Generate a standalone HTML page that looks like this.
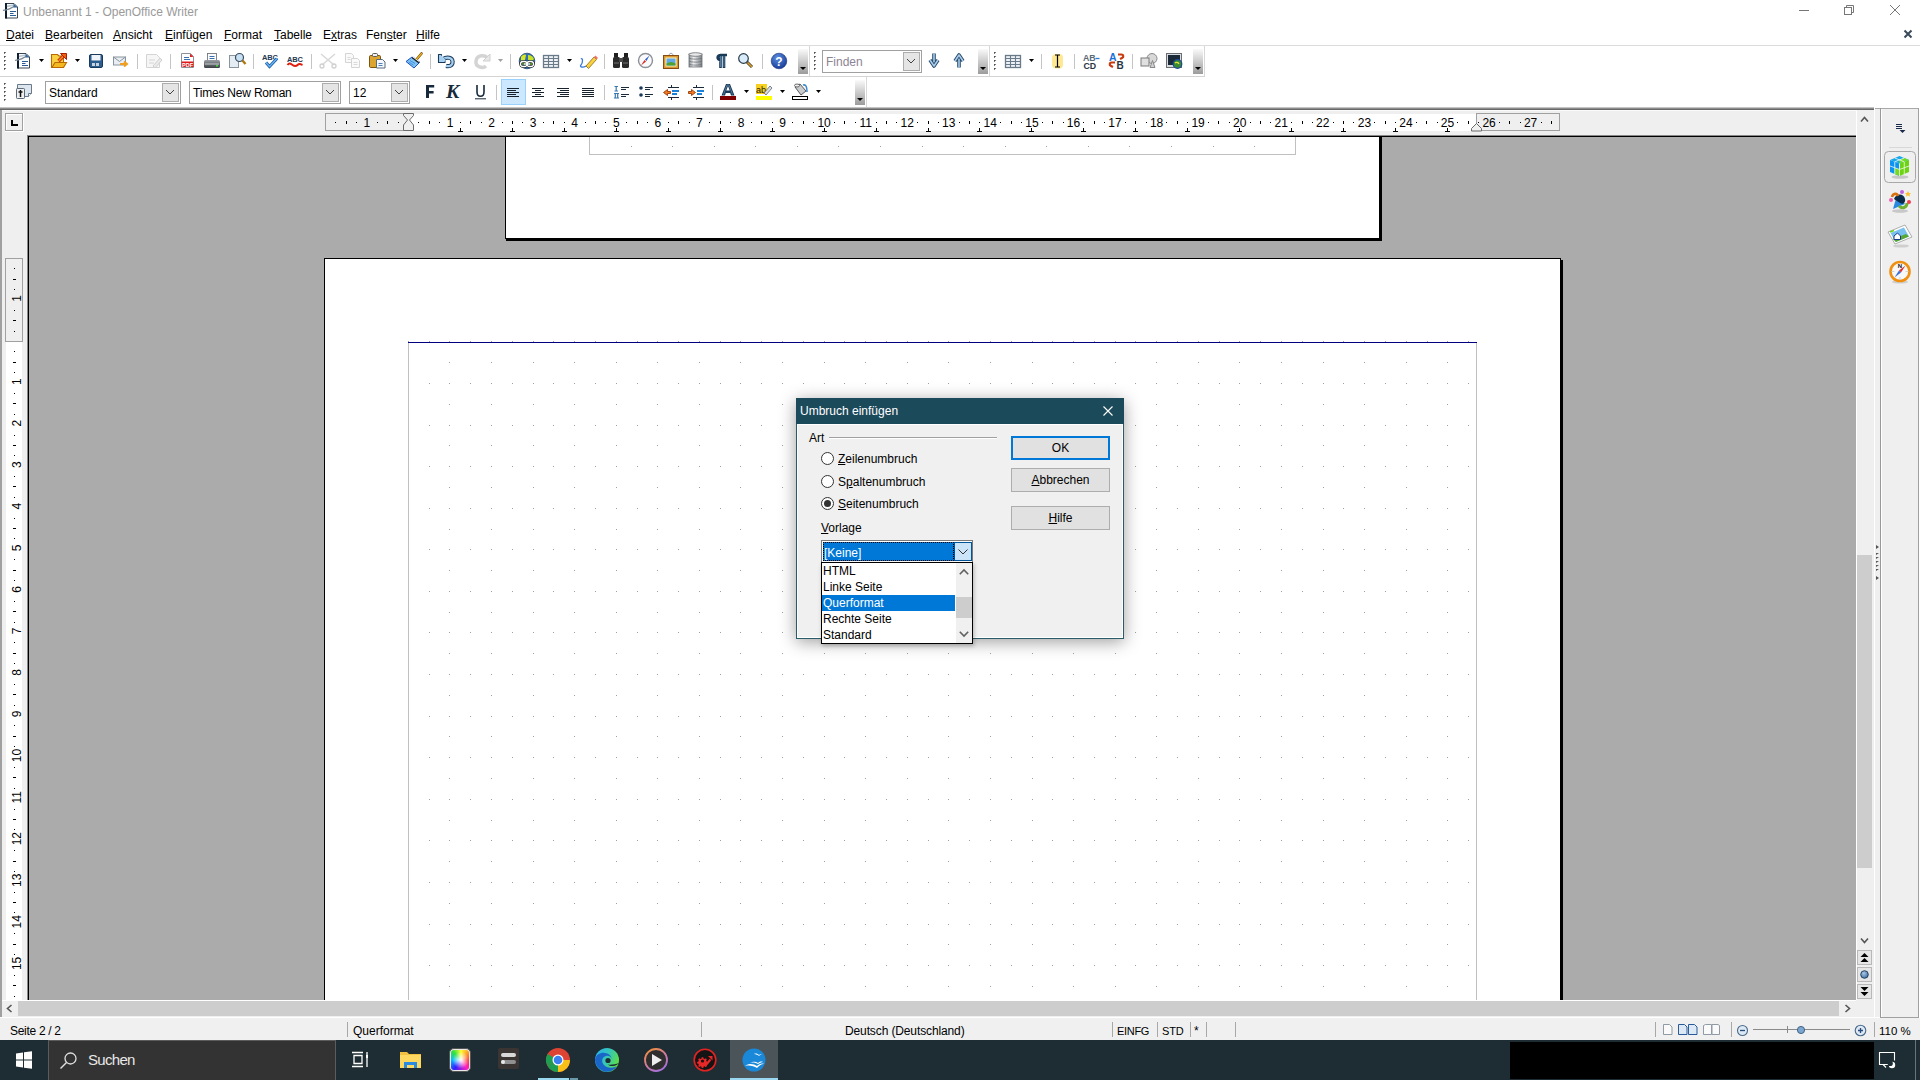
<!DOCTYPE html>
<html><head><meta charset="utf-8">
<style>
*{box-sizing:border-box}
html,body{margin:0;padding:0;width:1920px;height:1080px;overflow:hidden;background:#fff;font-family:"Liberation Sans",sans-serif;font-size:12px;color:#000}
.a{position:absolute}
.t{position:absolute;white-space:pre;font-size:12px;line-height:14px}
.u{text-decoration:underline;text-underline-offset:1px}
.sep{position:absolute;width:1px;background:#c8c8c8}
svg{position:absolute;overflow:visible}
</style></head><body>

<!-- ========== TITLE BAR ========== -->
<div class="a" style="left:0;top:0;width:1920px;height:45px;background:#fff"></div>
<div class="t" style="left:23px;top:5px;color:#9a9a9a">Unbenannt 1 - OpenOffice Writer</div>

<svg width="1920" height="46" viewBox="0 0 1920 46" style="left:0;top:0">
<!-- writer icon -->
<path d="M5.5 3.5h8.5l3.5 3.5v11h-12z" fill="#fcfdfe" stroke="#3a4650" stroke-width="1"/>
<rect x="5" y="3" width="2" height="15.5" fill="#0e1e30"/>
<path d="M10 11.5h6M10 13.5h3.5M10 15.5h6" stroke="#2c5c90" stroke-width="1.1"/>
<path d="M3 10.5c3-1 6-0.5 9-3c1.5-1 3-1.5 5-1" stroke="#7a8894" stroke-width="1.3" fill="none"/>
<path d="M7 6.5c2-1 5-1 7-1.5" stroke="#b8c4ce" stroke-width="1.5" fill="none"/>
<path d="M13.5 3.5l4 4h-4z" fill="#3a6a9a"/>
<!-- window controls -->
<rect x="1799" y="10" width="10" height="1" fill="#777"/>
<rect x="1844.5" y="7.5" width="7" height="7" fill="none" stroke="#777"/>
<path d="M1846.5 7.5v-2h7v7h-2" fill="none" stroke="#777"/>
<path d="M1890 5l10 10M1900 5l-10 10" stroke="#777" stroke-width="1"/>
<path d="M1904.5 30.5l7 7M1911.5 30.5l-7 7" stroke="#3a4a5a" stroke-width="2"/>
</svg>

<!-- ========== MENU BAR ========== -->
<div class="t" style="left:6px;top:28px"><span class="u">D</span>atei</div>
<div class="t" style="left:45px;top:28px"><span class="u">B</span>earbeiten</div>
<div class="t" style="left:113px;top:28px"><span class="u">A</span>nsicht</div>
<div class="t" style="left:165px;top:28px"><span class="u">E</span>infügen</div>
<div class="t" style="left:224px;top:28px"><span class="u">F</span>ormat</div>
<div class="t" style="left:274px;top:28px"><span class="u">T</span>abelle</div>
<div class="t" style="left:323px;top:28px">E<span class="u">x</span>tras</div>
<div class="t" style="left:366px;top:28px">Fen<span class="u">s</span>ter</div>
<div class="t" style="left:416px;top:28px"><span class="u">H</span>ilfe</div>
<div class="a" style="left:0;top:45px;width:1920px;height:1px;background:#dcdcdc"></div>

<!-- ========== TOOLBARS ========== -->
<div id="tb1" class="a" style="left:0;top:46px;width:1920px;height:30px;background:#fff"></div>
<div class="a" style="left:0;top:76px;width:1205px;height:1px;background:#d4d4d4"></div>
<div id="tb2" class="a" style="left:0;top:77px;width:1920px;height:31px;background:#fff"></div>

<!-- TOOLBAR 1 ICONS -->
<svg width="1920" height="62" viewBox="0 46 1920 62" style="left:0;top:46px">
<defs>
<linearGradient id="hdl" x1="0" y1="0" x2="0" y2="1"><stop offset="0" stop-color="#fafafa"/><stop offset="1" stop-color="#9c9c9c"/></linearGradient>
<linearGradient id="prt" x1="0" y1="0" x2="0" y2="1"><stop offset="0" stop-color="#9aa0a4"/><stop offset="1" stop-color="#3a3f44"/></linearGradient>
<radialGradient id="hlp" cx="0.4" cy="0.3" r="0.7"><stop offset="0" stop-color="#5a8ee0"/><stop offset="1" stop-color="#1a3f9a"/></radialGradient>
<radialGradient id="glb" cx="0.4" cy="0.35" r="0.7"><stop offset="0" stop-color="#b8d840"/><stop offset="0.6" stop-color="#4a8a60"/><stop offset="1" stop-color="#1d5a9a"/></radialGradient>
<linearGradient id="arw" x1="0" y1="0" x2="1" y2="0"><stop offset="0" stop-color="#e0eefa"/><stop offset="1" stop-color="#7fb0dc"/></linearGradient>
<linearGradient id="db" x1="0" y1="0" x2="1" y2="0"><stop offset="0" stop-color="#8a8f94"/><stop offset="0.35" stop-color="#f2f2f2"/><stop offset="1" stop-color="#7a7f84"/></linearGradient>
</defs>
<g id="grips" fill="#4a4a4a">
<path d="M4 52h2.2l-2.2 2.2zM4 56h2.2l-2.2 2.2zM4 60h2.2l-2.2 2.2zM4 64h2.2l-2.2 2.2zM4 68h2.2l-2.2 2.2z"/>
<path d="M4 83h2.2l-2.2 2.2zM4 87h2.2l-2.2 2.2zM4 91h2.2l-2.2 2.2zM4 95h2.2l-2.2 2.2zM4 99h2.2l-2.2 2.2z"/>
<path d="M814 52h2.2l-2.2 2.2zM814 56h2.2l-2.2 2.2zM814 60h2.2l-2.2 2.2zM814 64h2.2l-2.2 2.2zM814 68h2.2l-2.2 2.2z"/>
<path d="M994 52h2.2l-2.2 2.2zM994 56h2.2l-2.2 2.2zM994 60h2.2l-2.2 2.2zM994 64h2.2l-2.2 2.2zM994 68h2.2l-2.2 2.2z"/>
</g>
<!-- separators -->
<g fill="#c4c4c4">
<rect x="137" y="54" width="1" height="15"/><rect x="170" y="54" width="1" height="15"/>
<rect x="253" y="54" width="1" height="15"/><rect x="311" y="54" width="1" height="15"/>
<rect x="430" y="54" width="1" height="15"/><rect x="510" y="54" width="1" height="15"/>
<rect x="604" y="54" width="1" height="15"/><rect x="762" y="54" width="1" height="15"/>
<rect x="1041" y="54" width="1" height="15"/><rect x="1074" y="54" width="1" height="15"/>
<rect x="1132" y="54" width="1" height="15"/>
</g>
<!-- toolbar borders -->
<g fill="#d8d8d8"><rect x="809" y="46" width="1" height="30"/><rect x="989" y="46" width="1" height="30"/><rect x="1204" y="46" width="1" height="30"/><rect x="866" y="77" width="1" height="30"/></g>
<!-- handles -->
<rect x="798" y="49" width="10" height="25" fill="url(#hdl)"/><path d="M800 67h6l-3 3z"/>
<rect x="978" y="49" width="10" height="25" fill="url(#hdl)"/><path d="M980 67h6l-3 3z"/>
<rect x="1193" y="49" width="10" height="25" fill="url(#hdl)"/><path d="M1195 67h6l-3 3z"/>
<rect x="855" y="80" width="10" height="25" fill="url(#hdl)"/><path d="M857 98h6l-3 3z"/>
<!-- dropdown arrows -->
<g fill="#000"><path d="M39 59h5l-2.5 3z"/><path d="M75 59h5l-2.5 3z"/><path d="M393 59h5l-2.5 3z"/><path d="M462 59h5l-2.5 3z"/><path d="M567 59h5l-2.5 3z"/><path d="M1029 59h5l-2.5 3z"/>
<path d="M744 90h5l-2.5 3z"/><path d="M780 90h5l-2.5 3z"/><path d="M816 90h5l-2.5 3z"/></g>
<path d="M498 59h5l-2.5 3z" fill="#a0a0a0"/>

<!-- 1 new doc -->
<path d="M17.5 53.5h8.5l3.5 3.5v11h-12z" fill="#fcfdfe" stroke="#3a4650" stroke-width="1"/>
<rect x="17" y="53" width="2" height="15.5" fill="#0e1e30"/>
<path d="M22 61.5h6M22 63.5h3.5M22 65.5h6" stroke="#2c5c90" stroke-width="1.1"/>
<path d="M15 60.5c3-1 6-0.5 9-3c1.5-1 3-1.5 5-1" stroke="#7a8894" stroke-width="1.3" fill="none"/>
<path d="M19 56.5c2-1 5-1 7-1.5" stroke="#b8c4ce" stroke-width="1.5" fill="none"/>
<path d="M25.5 53.5l4 4h-4z" fill="#3a6a9a"/>
<!-- 2 open folder -->
<path d="M51.5 54.5h6l1.5 1.5h4.5v11.5h-12z" fill="#f8d040" stroke="#b86a00" stroke-width="1.1"/>
<path d="M55 62.5h11.5l-3 5h-11.5z" fill="#f4b820" stroke="#b86a00" stroke-width="1.1"/>
<path d="M58.5 61l5.5-5.5" stroke="#a82000" stroke-width="3.4"/>
<path d="M58.5 61l5.5-5.5" stroke="#f87820" stroke-width="1.8"/>
<path d="M60.5 53.5h6v6z" fill="#f06010" stroke="#a82000" stroke-width="1"/>
<!-- 3 save -->
<rect x="89.5" y="54.5" width="13" height="13" rx="1.5" fill="#2c5d8f" stroke="#1a3a5c"/>
<rect x="91.5" y="55" width="9" height="5.5" fill="#f0f4f8"/>
<rect x="92" y="63" width="3" height="3" fill="#c8d4e0"/><rect x="96" y="63" width="3" height="3" fill="#c8d4e0"/>
<!-- 4 email -->
<rect x="113.5" y="57" width="12" height="8" fill="#e8eef4" stroke="#8a949e"/>
<path d="M113.5 57l6 4.5l6-4.5" stroke="#8a949e" fill="none"/>
<path d="M120 64h6M124 61.5l3 2.5l-3 2.5" stroke="#f0a020" stroke-width="2" fill="none"/>
<!-- 5 edit doc faded -->
<path d="M146.5 54.5h10l3 3v10h-13z" fill="#f6f6f6" stroke="#d4d4d4"/>
<path d="M149 60h6M149 63h5" stroke="#d4d4d4"/>
<path d="M153 66l7-8l2 2l-7 8z" fill="#eaeaea" stroke="#d0d0d0"/>
<!-- 6 pdf -->
<path d="M181.5 53.5h9l3 3v11h-12z" fill="#fff" stroke="#8c9298"/>
<path d="M190 53.5l3.5 3.5h-3.5z" fill="#e02020"/>
<path d="M184 57.5h5M184 59.5h6" stroke="#3a70b0" stroke-width="1"/>
<rect x="181.5" y="61.5" width="12" height="5.5" fill="#e01818"/>
<text x="187.5" y="66.5" font-size="5.5" font-weight="bold" fill="#fff" text-anchor="middle" font-family="Liberation Sans">PDF</text>
<!-- 7 print -->
<rect x="207.5" y="53.5" width="9" height="7.5" fill="#fbfbfb" stroke="#707880" stroke-width="0.9"/>
<path d="M209.5 56.5h5M209.5 58.5h5" stroke="#3a70b0" stroke-width="1"/>
<rect x="204" y="60" width="16" height="8" rx="1.5" fill="url(#prt)"/>
<rect x="205" y="63.5" width="14" height="1" fill="#c8ccd0"/>
<rect x="216" y="65" width="2" height="1.5" fill="#40e040"/>
<!-- 8 preview -->
<rect x="229.5" y="55.5" width="9" height="12" fill="#e4ecf4" stroke="#8a949e"/>
<circle cx="239.5" cy="57.5" r="4" fill="#c8e0f4" stroke="#3a4a5a" stroke-width="1.2"/>
<path d="M242.5 60.5l3 3.5" stroke="#b07810" stroke-width="2.4"/>
<!-- 9 ABC check -->
<text x="262" y="59.5" font-size="7.5" font-weight="bold" fill="#1e3a54" font-family="Liberation Sans" textLength="16">ABC</text>
<path d="M266 62.5l3.5 4l7.5-8" stroke="#1a5aa8" stroke-width="3" fill="none"/>
<path d="M266 62.5l3.5 4l7.5-8" stroke="#6ab4f0" stroke-width="1.4" fill="none"/>
<!-- 10 ABC wave -->
<text x="287" y="61.5" font-size="7.5" font-weight="bold" fill="#1e3a54" font-family="Liberation Sans" textLength="16">ABC</text>
<path d="M287.5 65c2-3 3.5-1 5 0s3 2 5 0s3-1 5 0" stroke="#e02010" stroke-width="2" fill="none"/>
<!-- 11 cut faded -->
<path d="M321 54l13 11M335 54l-13 11" stroke="#d8d8d8" stroke-width="1.5"/>
<circle cx="322" cy="66" r="2" fill="none" stroke="#d0d0d0" stroke-width="1.3"/><circle cx="334" cy="66" r="2" fill="none" stroke="#d0d0d0" stroke-width="1.3"/>
<!-- 12 copy faded -->
<path d="M345.5 53.5h6l2 2v7h-8z" fill="#fafafa" stroke="#d4d4d4"/>
<path d="M351.5 58.5h6l2 2v7h-8z" fill="#fafafa" stroke="#d4d4d4"/>
<path d="M347.5 57.5h3M347.5 59.5h3M353.5 62.5h4M353.5 64.5h4" stroke="#d0d0d0" stroke-width="0.8"/>
<!-- 13 paste -->
<rect x="369.5" y="55.5" width="11" height="12" rx="1.2" fill="#dca530" stroke="#7a5410"/>
<rect x="372.5" y="53.5" width="5" height="3" rx="1" fill="#f0f0f0" stroke="#5a5a5a"/>
<path d="M376.5 59.5h6l2.5 2.5v6h-8.5z" fill="#f4f8fc" stroke="#5a6a7a"/>
<path d="M378.5 63.5h4M378.5 65.5h4" stroke="#3a70b0" stroke-width="0.9"/>
<!-- 14 brush -->
<path d="M416.5 59.5l5-6" stroke="#6a4a08" stroke-width="2.6" stroke-linecap="round"/>
<path d="M416.5 59.5l5-6" stroke="#e8b020" stroke-width="1.4" stroke-linecap="round"/>
<path d="M406 61.5l6-4.5l7.5 5.5l-5.5 5.5z" fill="#7cc4f4" stroke="#1a50c0" stroke-width="1"/>
<path d="M408.5 62l5 3M410 60.5l5 3" stroke="#3a80d8" stroke-width="0.8"/>
<path d="M412.5 57.5l6.5 5" stroke="#222" stroke-width="2.2"/>
<path d="M413 57l6 4.5" stroke="#f0f4f8" stroke-width="1"/>
<!-- 15 undo -->
<path d="M443 59c4-2.5 9.5-1.5 9.5 2.5c0.5 3.8-3 5.2-6.5 4.5" stroke="#1a3a5a" stroke-width="4.2" fill="none"/>
<path d="M443 59c4-2.5 9.5-1.5 9.5 2.5c0.5 3.8-3 5.2-6.5 4.5" stroke="#a8d0f0" stroke-width="2.2" fill="none"/>
<path d="M438.5 54.5h3v4l3.5 0.5v3.5h-6.5z" fill="#a8d0f0" stroke="#1a3a5a" stroke-width="1.1" stroke-linejoin="round"/>
<path d="M440 56l5 5" stroke="#a8d0f0" stroke-width="2.5"/>
<!-- 16 redo faded -->
<path d="M488 58.5c-3-4-11-4-12 2.5c-1 6 7 8 10 5" stroke="#d4d4d4" stroke-width="3.5" fill="none"/>
<path d="M490 54v7h-7z" fill="#e8e8e8" stroke="#d0d0d0"/>
<!-- 17 globe -->
<circle cx="527" cy="61" r="7.8" fill="#2f6eb4" stroke="#1a3a60" stroke-width="0.7"/>
<path d="M521 57c1-2 4-3 5-2l-1 5l-4 1z" fill="#d8e820"/><path d="M528 55c3 0 5 2 6 4l-2 2l-4-1z" fill="#c8e020"/>
<path d="M522 63l3-1l1 3h-3zM530 62l3 0l0 3l-3 0z" fill="#5a8a20"/>
<rect x="520.5" y="61.5" width="6.5" height="5" rx="2.5" fill="none" stroke="#111" stroke-width="2.4"/>
<rect x="527" y="61.5" width="6.5" height="5" rx="2.5" fill="none" stroke="#111" stroke-width="2.4"/>
<rect x="520.5" y="61.5" width="6.5" height="5" rx="2.5" fill="none" stroke="#fff" stroke-width="1.3"/>
<rect x="527" y="61.5" width="6.5" height="5" rx="2.5" fill="none" stroke="#fff" stroke-width="1.3"/>
<path d="M524 64h6" stroke="#fff" stroke-width="1.3"/>
<!-- 18 table -->
<rect x="543.5" y="55.5" width="15" height="12" fill="#eef2f6" stroke="#6a7a88" stroke-width="1.3"/>
<path d="M543.5 58.5h15M543.5 61.5h15M543.5 64.5h15M548.5 55.5v12M553.5 55.5v12" stroke="#6a7a88" stroke-width="1.1"/>
<!-- 19 draw pencil -->
<path d="M581 59c2-2 2 4 0 6s2 3 5 1" stroke="#3a7ad8" stroke-width="1.3" fill="none"/>
<path d="M586 66l8-9l2.5 2.5l-8 9z" fill="#f8d040" stroke="#8a6a10" stroke-width="0.8"/>
<path d="M594 57l1.5-1.5l2.5 2.5l-1.5 1.5z" fill="#f07070"/>
<!-- 20 binoculars -->
<rect x="614" y="53" width="4" height="4" fill="#202020"/><rect x="624" y="53" width="4" height="4" fill="#202020"/>
<rect x="613" y="57" width="7" height="11" rx="1.5" fill="#2a2a2a"/><rect x="622" y="57" width="7" height="11" rx="1.5" fill="#2a2a2a"/>
<rect x="619" y="58" width="4" height="4" fill="#4a4a4a"/>
<path d="M614 63h5M623 63h5" stroke="#888" stroke-width="0.8"/>
<!-- 21 compass -->
<circle cx="645.5" cy="60.5" r="7" fill="#fafafa" stroke="#8a9098" stroke-width="1.4"/>
<path d="M649.5 55.5l-3 5.5l-1.5-1.5z" fill="#2a5ad0"/><path d="M641 65.5l3.5-5.5l1.5 1.5z" fill="#e02020"/>
<!-- 22 gallery -->
<path d="M668.5 55l2.5-2l2.5 2" stroke="#888" fill="none" stroke-width="0.8"/>
<rect x="663.5" y="55.5" width="15" height="13" fill="#d89a30" stroke="#8a4a10"/>
<rect x="665.5" y="57.5" width="11" height="9" fill="#fff4c0"/>
<rect x="666.5" y="58.5" width="9" height="7" fill="#60a8e8"/>
<path d="M666.5 63.5c3-2 6-2 9 0v2h-9z" fill="#50a030"/>
<!-- 23 db -->
<rect x="689" y="54" width="13" height="13" fill="url(#db)" stroke="#6a6f74" stroke-width="0.8"/>
<ellipse cx="695.5" cy="54.5" rx="6.5" ry="1.8" fill="#e8e8e8" stroke="#6a6f74" stroke-width="0.8"/>
<path d="M689 58c2 1.5 11 1.5 13 0M689 61c2 1.5 11 1.5 13 0M689 64c2 1.5 11 1.5 13 0" stroke="#6a6f74" stroke-width="0.8" fill="none"/>
<!-- 24 pilcrow -->
<path d="M720 55h7M721 55c-4 0-5 5 0 5M720.5 55v13M724 55v13" stroke="#1a3a5a" stroke-width="2.6" fill="none"/>
<path d="M720.5 56v11M724 56v11" stroke="#5a8ab0" stroke-width="0.8"/>
<!-- 25 zoom -->
<circle cx="743.5" cy="58.5" r="4.8" fill="#d8ecfa" stroke="#2a3a4a" stroke-width="1.2"/>
<path d="M747 62l5 5" stroke="#3a3a3a" stroke-width="3"/><path d="M747.5 62.5l4.5 4.5" stroke="#e0a020" stroke-width="1.6"/>
<!-- 26 help -->
<circle cx="779" cy="61" r="7.8" fill="url(#hlp)" stroke="#1a2f80" stroke-width="0.6"/>
<text x="779" y="65.5" font-size="12" font-weight="bold" fill="#fff" text-anchor="middle" font-family="Liberation Sans">?</text>
<!-- find toolbar -->
<path d="M934 53.5v8.5M930 60l4 6l4-6" stroke="#2a4a6a" stroke-width="3.6" fill="none" stroke-linejoin="round"/>
<path d="M934 53.5v8.5M930 60l4 6l4-6" stroke="#a8ccec" stroke-width="1.6" fill="none" stroke-linejoin="round"/>
<path d="M959 67.5v-8.5M955 61l4-6l4 6" stroke="#2a4a6a" stroke-width="3.6" fill="none" stroke-linejoin="round"/>
<path d="M959 67.5v-8.5M955 61l4-6l4 6" stroke="#a8ccec" stroke-width="1.6" fill="none" stroke-linejoin="round"/>
<!-- table tb -->
<rect x="1005.5" y="55.5" width="15" height="12" fill="#eef2f6" stroke="#6a7a88" stroke-width="1.3"/>
<path d="M1005.5 58.5h15M1005.5 61.5h15M1005.5 64.5h15M1010.5 55.5v12M1015.5 55.5v12" stroke="#6a7a88" stroke-width="1.1"/>
<!-- ibeam -->
<rect x="1052" y="54" width="11" height="14.5" rx="4" fill="#fde070" opacity="0.75"/>
<path d="M1055 55h5M1057.5 55v12M1055 67h5" stroke="#000" stroke-width="1.2"/>
<!-- AB-CD -->
<text x="1083" y="60.5" font-size="8.8" font-weight="bold" fill="#5a6a78" font-family="Liberation Sans">AB</text>
<path d="M1095.5 58.5h4" stroke="#2a80d0" stroke-width="1.3"/>
<text x="1083.5" y="68.5" font-size="8.8" font-weight="bold" fill="#2a3440" font-family="Liberation Sans">CD</text>
<!-- A<->B -->
<text x="1109" y="61" font-size="10.5" font-weight="bold" fill="#1a70d8" font-family="Liberation Sans">A</text>
<text x="1116.5" y="69" font-size="10" font-weight="bold" fill="#2a3440" font-family="Liberation Sans">B</text>
<path d="M1118 54.5h3.5c2 0 2.5 2.5 0.5 3.5l-2 1" stroke="#c83a10" stroke-width="2.2" fill="none"/>
<path d="M1115 62.5h-3.5c-2 0-2.5 2.5-0.5 3.5l2 1" stroke="#c83a10" stroke-width="2.2" fill="none"/>
<!-- shapes -->
<circle cx="1152" cy="58.5" r="5" fill="#d8d8d8" stroke="#8a8a8a"/>
<path d="M1150 67.5l2.5-7l2.5 7z" fill="#d0d0d0" stroke="#8a8a8a"/>
<rect x="1141" y="58" width="8" height="8" fill="#e0e0e0" stroke="#7a7a7a"/>
<!-- screen globe -->
<rect x="1166.5" y="53.5" width="15" height="14" fill="#d8dce0" stroke="#6a6e72"/>
<rect x="1168" y="55" width="12" height="10" fill="#1a2a38"/>
<circle cx="1177.5" cy="64" r="4.3" fill="#3a8a30" stroke="#1a4a9a" stroke-width="1.2"/>
<path d="M1175 63c1-1 3-1 4 1" stroke="#e8e040" stroke-width="1.2" fill="none"/>
</svg>
<!-- COMBOBOXES -->
<div class="a" style="left:822px;top:50px;width:100px;height:23px;border:1px solid #a0a0a0;background:#fff"></div>
<div class="a" style="left:903px;top:52px;width:17px;height:19px;border:1px solid #adadad;background:#e5e5e5"></div>
<div class="t" style="left:826px;top:55px;color:#8c8494">Finden</div>
<div class="a" style="left:45px;top:81px;width:136px;height:23px;border:1px solid #a0a0a0;background:#fff"></div>
<div class="a" style="left:162px;top:83px;width:17px;height:19px;border:1px solid #adadad;background:#e5e5e5"></div>
<div class="t" style="left:49px;top:86px">Standard</div>
<div class="a" style="left:189px;top:81px;width:152px;height:23px;border:1px solid #a0a0a0;background:#fff"></div>
<div class="a" style="left:322px;top:83px;width:17px;height:19px;border:1px solid #adadad;background:#e5e5e5"></div>
<div class="t" style="left:193px;top:86px;letter-spacing:-0.2px">Times New Roman</div>
<div class="a" style="left:349px;top:81px;width:61px;height:23px;border:1px solid #a0a0a0;background:#fff"></div>
<div class="a" style="left:391px;top:83px;width:17px;height:19px;border:1px solid #adadad;background:#e5e5e5"></div>
<div class="t" style="left:353px;top:86px">12</div>
<!-- active align box -->
<div class="a" style="left:501px;top:79px;width:25px;height:26px;border:1px solid #99d1ff;background:#cce8ff"></div>
<!-- TOOLBAR 2 ICONS -->
<svg width="1920" height="62" viewBox="0 46 1920 62" style="left:0;top:46px">
<!-- combobox chevrons -->
<g stroke="#404040" stroke-width="1" fill="none">
<path d="M907 59l4 4l4-4"/><path d="M166 90l4 4l4-4"/><path d="M326 90l4 4l4-4"/><path d="M395 90l4 4l4-4"/>
</g>
<!-- styles icon -->
<path d="M17.5 84.5h14v9l-3 3h-11z" fill="#dde5ee" stroke="#6a7a8a"/>
<path d="M28.5 96.5v-3h3" fill="#fff" stroke="#6a7a8a"/>
<rect x="16.5" y="88.5" width="8" height="10" rx="0.8" fill="#f0f0f0" stroke="#5a6a7a"/>
<path d="M20.5 90v7M18.5 92h4" stroke="#111" stroke-width="1.5"/>
<!-- separators -->
<g fill="#c4c4c4"><rect x="496" y="85" width="1" height="15"/><rect x="604" y="85" width="1" height="15"/><rect x="712" y="85" width="1" height="15"/></g>
<!-- F K U -->
<path d="M426 85h8.2v2.6h-5.2v3.3h4.6v2.5h-4.6v4.6h-3z" fill="#172a3c"/>
<text x="446" y="98" font-size="19" font-weight="bold" font-style="italic" fill="#172a3c" font-family="Liberation Serif" transform="translate(446 98) scale(1.05 1) translate(-446 -98)">K</text>
<path d="M477 85v7c0 2.8 1.4 4.3 3.5 4.3s3.5-1.5 3.5-4.3v-7" stroke="#172a3c" stroke-width="1.6" fill="none"/>
<rect x="475" y="98.3" width="11" height="1" fill="#172a3c"/>
<!-- align icons -->
<g fill="#18222c">
<rect x="507" y="88" width="12" height="1"/><rect x="507" y="90" width="9" height="1"/><rect x="507" y="92" width="12" height="1"/><rect x="507" y="94" width="9" height="1"/><rect x="507" y="96" width="12" height="1"/>
<rect x="532" y="88" width="12" height="1"/><rect x="535" y="90" width="6" height="1"/><rect x="532" y="92" width="12" height="1"/><rect x="535" y="94" width="6" height="1"/><rect x="532" y="96" width="12" height="1"/>
<rect x="557" y="88" width="12" height="1"/><rect x="560" y="90" width="9" height="1"/><rect x="557" y="92" width="12" height="1"/><rect x="560" y="94" width="9" height="1"/><rect x="557" y="96" width="12" height="1"/>
<rect x="582" y="88" width="12" height="1"/><rect x="582" y="90" width="12" height="1"/><rect x="582" y="92" width="12" height="1"/><rect x="582" y="94" width="12" height="1"/><rect x="582" y="96" width="12" height="1"/>
</g>
<!-- numbering -->
<path d="M614.5 86.5h3.5M616.2 86.5v4.5M614.5 91h3.5M614 93.5h5M615.3 93.5v4.5M617.7 93.5v4.5M614 98h5" stroke="#3a78b0" stroke-width="1.2"/>
<path d="M621 87.5h8M621 89.5h5M621 94.5h8M621 96.5h5" stroke="#1a2a3a" stroke-width="1.1"/>
<!-- bullets -->
<circle cx="641" cy="88" r="1.8" fill="#1a3a5a"/><circle cx="641" cy="95" r="1.8" fill="#1a3a5a"/>
<path d="M645 87.5h8M645 89.5h5M645 94.5h8M645 96.5h5" stroke="#1a2a3a" stroke-width="1.1"/>
<!-- decrease indent -->
<path d="M668 87.5h11M668 97.5h11M671.5 85v2M671.5 98v2" stroke="#1a2a3a" stroke-width="1"/>
<path d="M672 91h7M672 94h5" stroke="#1a80d8" stroke-width="2"/>
<path d="M670.5 91.5h-3v-2l-4 3l4 3v-2h3z" fill="#f07a20" stroke="#9a3a08" stroke-width="0.9" stroke-linejoin="round"/>
<!-- increase indent -->
<path d="M693 87.5h11M693 97.5h11M696.5 85v2M696.5 98v2" stroke="#1a2a3a" stroke-width="1"/>
<path d="M697 91h7M697 94h5" stroke="#1a80d8" stroke-width="2"/>
<path d="M688.5 91.5h3v-2l4 3l-4 3v-2h-3z" fill="#f07a20" stroke="#9a3a08" stroke-width="0.9" stroke-linejoin="round"/>
<!-- font color -->
<path d="M721.5 95.5l4.5-11.5h4l4.5 11.5h-3.5l-0.8-2.5h-4.4l-0.8 2.5zM726.3 90.5h3.4l-1.7-4.5z" fill="#1a3a5a" fill-rule="evenodd"/>
<path d="M723.5 94.5l3.5-9.5h2l3.5 9.5" stroke="#6a90b0" stroke-width="0.7" fill="none"/>
<rect x="720" y="96" width="16" height="4" fill="#800000"/>
<!-- highlight -->
<rect x="756" y="84" width="11" height="10" fill="#f8d020"/>
<text x="756" y="93" font-size="9" fill="#1a1a1a" font-family="Liberation Sans">ab</text>
<path d="M764 93l6-7l2 2l-6 7z" fill="#d8dce0" stroke="#5a6a7a" stroke-width="0.8"/>
<path d="M763 94l1.5-1.5l1 1z" fill="#e07020"/>
<rect x="756" y="96" width="16" height="4" fill="#ffff00"/>
<!-- background color -->
<path d="M795 87l5-3l6 7l-5 4z" fill="#c8cccf" stroke="#4a4a4a" stroke-width="0.9"/>
<ellipse cx="797" cy="85.5" rx="2.5" ry="1.5" fill="#f0f0f0" stroke="#4a4a4a" stroke-width="0.8"/>
<path d="M803 85c3-1 4 2 4 7" stroke="#3a8ad0" stroke-width="1.6" fill="none"/>
<rect x="792.5" y="96.5" width="15" height="3" fill="#fff" stroke="#000"/>
</svg>

<!-- ========== RULER ROW ========== -->
<div class="a" style="left:0;top:110px;width:1856px;height:890px;background:#efefef"></div>
<div class="a" style="left:0;top:108px;width:2px;height:910px;background:#a0a0a0"></div>
<svg width="1875" height="30" viewBox="0 107 1875 30" style="left:0;top:107px">
<rect x="0" y="107" width="1874" height="1" fill="#c4c4c4"/><rect x="0" y="108" width="1874" height="1" fill="#8c8c8c"/><rect x="0" y="109" width="1874" height="1" fill="#686868"/><rect x="2" y="110" width="1854" height="1" fill="#fafafa"/>
<rect x="5.5" y="113.5" width="17" height="17" fill="#efefef" stroke="#a0a0a0"/><rect x="6" y="114" width="16" height="1" fill="#fff"/><rect x="6" y="114" width="1" height="16" fill="#fff"/><rect x="23" y="113" width="1" height="19" fill="#fff"/><rect x="5" y="131" width="19" height="1" fill="#fff"/>
<path d="M11 120h2v4h5v2h-7z" fill="#000"/>
<rect x="408" y="114" width="1068" height="17" fill="#fff"/>
<rect x="325.5" y="113.5" width="83" height="17" fill="#efefef" stroke="#a0a0a0"/>
<rect x="1476.5" y="113.5" width="83" height="17" fill="#efefef" stroke="#a0a0a0"/>
<path fill="#000" d="M335 122h1v1h-1zM346 121h1v3h-1zM356 122h1v1h-1zM377 122h1v1h-1zM387 121h1v3h-1zM398 122h1v1h-1zM418 122h1v1h-1zM429 121h1v3h-1zM439 122h1v1h-1zM460 122h1v1h-1zM470 121h1v3h-1zM481 122h1v1h-1zM502 122h1v1h-1zM512 121h1v3h-1zM522 122h1v1h-1zM543 122h1v1h-1zM553 121h1v3h-1zM564 122h1v1h-1zM585 122h1v1h-1zM595 121h1v3h-1zM605 122h1v1h-1zM626 122h1v1h-1zM637 121h1v3h-1zM647 122h1v1h-1zM668 122h1v1h-1zM678 121h1v3h-1zM689 122h1v1h-1zM709 122h1v1h-1zM720 121h1v3h-1zM730 122h1v1h-1zM751 122h1v1h-1zM761 121h1v3h-1zM772 122h1v1h-1zM792 122h1v1h-1zM803 121h1v3h-1zM813 122h1v1h-1zM834 122h1v1h-1zM844 121h1v3h-1zM855 122h1v1h-1zM876 122h1v1h-1zM886 121h1v3h-1zM896 122h1v1h-1zM917 122h1v1h-1zM928 121h1v3h-1zM938 122h1v1h-1zM959 122h1v1h-1zM969 121h1v3h-1zM979 122h1v1h-1zM1000 122h1v1h-1zM1011 121h1v3h-1zM1021 122h1v1h-1zM1042 122h1v1h-1zM1052 121h1v3h-1zM1063 122h1v1h-1zM1083 122h1v1h-1zM1094 121h1v3h-1zM1104 122h1v1h-1zM1125 122h1v1h-1zM1135 121h1v3h-1zM1146 122h1v1h-1zM1166 122h1v1h-1zM1177 121h1v3h-1zM1187 122h1v1h-1zM1208 122h1v1h-1zM1218 121h1v3h-1zM1229 122h1v1h-1zM1250 122h1v1h-1zM1260 121h1v3h-1zM1270 122h1v1h-1zM1291 122h1v1h-1zM1302 121h1v3h-1zM1312 122h1v1h-1zM1333 122h1v1h-1zM1343 121h1v3h-1zM1353 122h1v1h-1zM1374 122h1v1h-1zM1385 121h1v3h-1zM1395 122h1v1h-1zM1416 122h1v1h-1zM1426 121h1v3h-1zM1437 122h1v1h-1zM1457 122h1v1h-1zM1468 121h1v3h-1zM1478 122h1v1h-1zM1499 122h1v1h-1zM1509 121h1v3h-1zM1520 122h1v1h-1zM1541 122h1v1h-1zM1551 121h1v3h-1z"/>
<text x="366.9" y="127" font-size="12" text-anchor="middle" font-family="Liberation Sans" fill="#000">1</text>
<text x="450.1" y="127" font-size="12" text-anchor="middle" font-family="Liberation Sans" fill="#000">1</text>
<text x="491.6" y="127" font-size="12" text-anchor="middle" font-family="Liberation Sans" fill="#000">2</text>
<text x="533.2" y="127" font-size="12" text-anchor="middle" font-family="Liberation Sans" fill="#000">3</text>
<text x="574.7" y="127" font-size="12" text-anchor="middle" font-family="Liberation Sans" fill="#000">4</text>
<text x="616.3" y="127" font-size="12" text-anchor="middle" font-family="Liberation Sans" fill="#000">5</text>
<text x="657.9" y="127" font-size="12" text-anchor="middle" font-family="Liberation Sans" fill="#000">6</text>
<text x="699.4" y="127" font-size="12" text-anchor="middle" font-family="Liberation Sans" fill="#000">7</text>
<text x="741.0" y="127" font-size="12" text-anchor="middle" font-family="Liberation Sans" fill="#000">8</text>
<text x="782.5" y="127" font-size="12" text-anchor="middle" font-family="Liberation Sans" fill="#000">9</text>
<text x="824.1" y="127" font-size="12" text-anchor="middle" font-family="Liberation Sans" fill="#000">10</text>
<text x="865.7" y="127" font-size="12" text-anchor="middle" font-family="Liberation Sans" fill="#000">11</text>
<text x="907.2" y="127" font-size="12" text-anchor="middle" font-family="Liberation Sans" fill="#000">12</text>
<text x="948.8" y="127" font-size="12" text-anchor="middle" font-family="Liberation Sans" fill="#000">13</text>
<text x="990.3" y="127" font-size="12" text-anchor="middle" font-family="Liberation Sans" fill="#000">14</text>
<text x="1031.9" y="127" font-size="12" text-anchor="middle" font-family="Liberation Sans" fill="#000">15</text>
<text x="1073.5" y="127" font-size="12" text-anchor="middle" font-family="Liberation Sans" fill="#000">16</text>
<text x="1115.0" y="127" font-size="12" text-anchor="middle" font-family="Liberation Sans" fill="#000">17</text>
<text x="1156.6" y="127" font-size="12" text-anchor="middle" font-family="Liberation Sans" fill="#000">18</text>
<text x="1198.1" y="127" font-size="12" text-anchor="middle" font-family="Liberation Sans" fill="#000">19</text>
<text x="1239.7" y="127" font-size="12" text-anchor="middle" font-family="Liberation Sans" fill="#000">20</text>
<text x="1281.3" y="127" font-size="12" text-anchor="middle" font-family="Liberation Sans" fill="#000">21</text>
<text x="1322.8" y="127" font-size="12" text-anchor="middle" font-family="Liberation Sans" fill="#000">22</text>
<text x="1364.4" y="127" font-size="12" text-anchor="middle" font-family="Liberation Sans" fill="#000">23</text>
<text x="1405.9" y="127" font-size="12" text-anchor="middle" font-family="Liberation Sans" fill="#000">24</text>
<text x="1447.5" y="127" font-size="12" text-anchor="middle" font-family="Liberation Sans" fill="#000">25</text>
<text x="1489.1" y="127" font-size="12" text-anchor="middle" font-family="Liberation Sans" fill="#000">26</text>
<text x="1530.6" y="127" font-size="12" text-anchor="middle" font-family="Liberation Sans" fill="#000">27</text>
<path fill="#000" d="M460 128h1v3h2v1h-5v-1h2zM512 128h1v3h2v1h-5v-1h2zM564 128h1v3h2v1h-5v-1h2zM616 128h1v3h2v1h-5v-1h2zM668 128h1v3h2v1h-5v-1h2zM720 128h1v3h2v1h-5v-1h2zM772 128h1v3h2v1h-5v-1h2zM824 128h1v3h2v1h-5v-1h2zM876 128h1v3h2v1h-5v-1h2zM928 128h1v3h2v1h-5v-1h2zM979 128h1v3h2v1h-5v-1h2zM1031 128h1v3h2v1h-5v-1h2zM1083 128h1v3h2v1h-5v-1h2zM1135 128h1v3h2v1h-5v-1h2zM1187 128h1v3h2v1h-5v-1h2zM1239 128h1v3h2v1h-5v-1h2zM1291 128h1v3h2v1h-5v-1h2zM1343 128h1v3h2v1h-5v-1h2zM1395 128h1v3h2v1h-5v-1h2zM1447 128h1v3h2v1h-5v-1h2z"/>
<path d="M403.5 113.5h10v2l-4 4.5l4 5v5.5h-10v-5.5l4-5l-4-4.5z" fill="#f0f0f0" stroke="#6a6a6a"/>

<path d="M1476.5 123.5l5 5v2.5h-10v-2.5z" fill="#f0f0f0" stroke="#6a6a6a"/>
</svg>
<svg width="28" height="864" viewBox="0 136 28 864" style="left:0;top:136px">
<rect x="5.5" y="258.5" width="17" height="83" fill="#efefef" stroke="#a0a0a0"/>
<rect x="6" y="342" width="16" height="660" fill="#fff"/>
<path fill="#000" d="M14 268h1v1h-1zM13 279h3v1h-3zM14 289h1v1h-1zM14 310h1v1h-1zM13 320h3v1h-3zM14 331h1v1h-1zM14 351h1v1h-1zM13 362h3v1h-3zM14 372h1v1h-1zM14 393h1v1h-1zM13 403h3v1h-3zM14 414h1v1h-1zM14 435h1v1h-1zM13 445h3v1h-3zM14 455h1v1h-1zM14 476h1v1h-1zM13 486h3v1h-3zM14 497h1v1h-1zM14 518h1v1h-1zM13 528h3v1h-3zM14 538h1v1h-1zM14 559h1v1h-1zM13 570h3v1h-3zM14 580h1v1h-1zM14 601h1v1h-1zM13 611h3v1h-3zM14 622h1v1h-1zM14 642h1v1h-1zM13 653h3v1h-3zM14 663h1v1h-1zM14 684h1v1h-1zM13 694h3v1h-3zM14 705h1v1h-1zM14 725h1v1h-1zM13 736h3v1h-3zM14 746h1v1h-1zM14 767h1v1h-1zM13 777h3v1h-3zM14 788h1v1h-1zM14 809h1v1h-1zM13 819h3v1h-3zM14 829h1v1h-1zM14 850h1v1h-1zM13 861h3v1h-3zM14 871h1v1h-1zM14 892h1v1h-1zM13 902h3v1h-3zM14 912h1v1h-1zM14 933h1v1h-1zM13 944h3v1h-3zM14 954h1v1h-1zM14 975h1v1h-1zM13 985h3v1h-3zM14 996h1v1h-1z"/>
<text transform="translate(21 298.4) rotate(-90)" x="0" y="0" font-size="12" text-anchor="middle" font-family="Liberation Sans" fill="#000">1</text>
<text transform="translate(21 381.6) rotate(-90)" x="0" y="0" font-size="12" text-anchor="middle" font-family="Liberation Sans" fill="#000">1</text>
<text transform="translate(21 423.1) rotate(-90)" x="0" y="0" font-size="12" text-anchor="middle" font-family="Liberation Sans" fill="#000">2</text>
<text transform="translate(21 464.7) rotate(-90)" x="0" y="0" font-size="12" text-anchor="middle" font-family="Liberation Sans" fill="#000">3</text>
<text transform="translate(21 506.2) rotate(-90)" x="0" y="0" font-size="12" text-anchor="middle" font-family="Liberation Sans" fill="#000">4</text>
<text transform="translate(21 547.8) rotate(-90)" x="0" y="0" font-size="12" text-anchor="middle" font-family="Liberation Sans" fill="#000">5</text>
<text transform="translate(21 589.4) rotate(-90)" x="0" y="0" font-size="12" text-anchor="middle" font-family="Liberation Sans" fill="#000">6</text>
<text transform="translate(21 630.9) rotate(-90)" x="0" y="0" font-size="12" text-anchor="middle" font-family="Liberation Sans" fill="#000">7</text>
<text transform="translate(21 672.5) rotate(-90)" x="0" y="0" font-size="12" text-anchor="middle" font-family="Liberation Sans" fill="#000">8</text>
<text transform="translate(21 714.0) rotate(-90)" x="0" y="0" font-size="12" text-anchor="middle" font-family="Liberation Sans" fill="#000">9</text>
<text transform="translate(21 755.6) rotate(-90)" x="0" y="0" font-size="12" text-anchor="middle" font-family="Liberation Sans" fill="#000">10</text>
<text transform="translate(21 797.2) rotate(-90)" x="0" y="0" font-size="12" text-anchor="middle" font-family="Liberation Sans" fill="#000">11</text>
<text transform="translate(21 838.7) rotate(-90)" x="0" y="0" font-size="12" text-anchor="middle" font-family="Liberation Sans" fill="#000">12</text>
<text transform="translate(21 880.3) rotate(-90)" x="0" y="0" font-size="12" text-anchor="middle" font-family="Liberation Sans" fill="#000">13</text>
<text transform="translate(21 921.8) rotate(-90)" x="0" y="0" font-size="12" text-anchor="middle" font-family="Liberation Sans" fill="#000">14</text>
<text transform="translate(21 963.4) rotate(-90)" x="0" y="0" font-size="12" text-anchor="middle" font-family="Liberation Sans" fill="#000">15</text>
</svg>

<!-- canvas -->
<div class="a" style="left:27px;top:135px;width:1829px;height:865px;background:#888"></div>
<div class="a" style="left:28px;top:136px;width:1828px;height:864px;background:#000"></div>
<div id="canvas" class="a" style="left:29px;top:137px;width:1827px;height:863px;background:#ababab;overflow:hidden"><div class="a" style="left:-29px;top:-137px;width:1920px;height:1080px">
<!-- page 1 -->
<div class="a" style="left:505px;top:100px;width:875px;height:139px;background:#000"></div>
<div class="a" style="left:506px;top:239px;width:876px;height:2px;background:#000"></div>
<div class="a" style="left:1380px;top:100px;width:2px;height:141px;background:#000"></div>
<div class="a" style="left:506px;top:100px;width:873px;height:138px;background:#fff"></div>
<div class="a" style="left:589px;top:100px;width:707px;height:55px;border:1px solid #c0c0c0;border-top:none"></div>
<svg width="1920" height="200" style="left:0;top:0"><path fill="#a0a0a0" d="M631 146h1v1h-1zM672 146h1v1h-1zM714 146h1v1h-1zM755 146h1v1h-1zM797 146h1v1h-1zM838 146h1v1h-1zM880 146h1v1h-1zM922 146h1v1h-1zM963 146h1v1h-1zM1005 146h1v1h-1zM1046 146h1v1h-1zM1088 146h1v1h-1zM1129 146h1v1h-1zM1171 146h1v1h-1zM1213 146h1v1h-1zM1254 146h1v1h-1z"/></svg>
<!-- page 2 -->
<div class="a" style="left:324px;top:258px;width:1237px;height:900px;background:#000"></div>
<div class="a" style="left:1561px;top:260px;width:2px;height:900px;background:#000"></div>
<div class="a" style="left:325px;top:259px;width:1235px;height:900px;background:#fff"></div>
<div class="a" style="left:408px;top:342px;width:1px;height:700px;background:#c0c0c0"></div>
<div class="a" style="left:1476px;top:342px;width:1px;height:700px;background:#c0c0c0"></div>
<div class="a" style="left:408px;top:342px;width:1069px;height:1px;background:#000080"></div>
<svg width="1920" height="1080" style="left:0;top:0"><path fill="#a0a0a0" d="M429 383h1v1h-1zM449 383h1v1h-1zM470 383h1v1h-1zM491 383h1v1h-1zM512 383h1v1h-1zM533 383h1v1h-1zM553 383h1v1h-1zM574 383h1v1h-1zM595 383h1v1h-1zM616 383h1v1h-1zM637 383h1v1h-1zM657 383h1v1h-1zM678 383h1v1h-1zM699 383h1v1h-1zM720 383h1v1h-1zM740 383h1v1h-1zM761 383h1v1h-1zM782 383h1v1h-1zM803 383h1v1h-1zM824 383h1v1h-1zM844 383h1v1h-1zM865 383h1v1h-1zM886 383h1v1h-1zM907 383h1v1h-1zM928 383h1v1h-1zM948 383h1v1h-1zM969 383h1v1h-1zM990 383h1v1h-1zM1011 383h1v1h-1zM1032 383h1v1h-1zM1052 383h1v1h-1zM1073 383h1v1h-1zM1094 383h1v1h-1zM1115 383h1v1h-1zM1135 383h1v1h-1zM1156 383h1v1h-1zM1177 383h1v1h-1zM1198 383h1v1h-1zM1219 383h1v1h-1zM1239 383h1v1h-1zM1260 383h1v1h-1zM1281 383h1v1h-1zM1302 383h1v1h-1zM1323 383h1v1h-1zM1343 383h1v1h-1zM1364 383h1v1h-1zM1385 383h1v1h-1zM1406 383h1v1h-1zM1427 383h1v1h-1zM1447 383h1v1h-1zM1468 383h1v1h-1zM429 425h1v1h-1zM449 425h1v1h-1zM470 425h1v1h-1zM491 425h1v1h-1zM512 425h1v1h-1zM533 425h1v1h-1zM553 425h1v1h-1zM574 425h1v1h-1zM595 425h1v1h-1zM616 425h1v1h-1zM637 425h1v1h-1zM657 425h1v1h-1zM678 425h1v1h-1zM699 425h1v1h-1zM720 425h1v1h-1zM740 425h1v1h-1zM761 425h1v1h-1zM782 425h1v1h-1zM803 425h1v1h-1zM824 425h1v1h-1zM844 425h1v1h-1zM865 425h1v1h-1zM886 425h1v1h-1zM907 425h1v1h-1zM928 425h1v1h-1zM948 425h1v1h-1zM969 425h1v1h-1zM990 425h1v1h-1zM1011 425h1v1h-1zM1032 425h1v1h-1zM1052 425h1v1h-1zM1073 425h1v1h-1zM1094 425h1v1h-1zM1115 425h1v1h-1zM1135 425h1v1h-1zM1156 425h1v1h-1zM1177 425h1v1h-1zM1198 425h1v1h-1zM1219 425h1v1h-1zM1239 425h1v1h-1zM1260 425h1v1h-1zM1281 425h1v1h-1zM1302 425h1v1h-1zM1323 425h1v1h-1zM1343 425h1v1h-1zM1364 425h1v1h-1zM1385 425h1v1h-1zM1406 425h1v1h-1zM1427 425h1v1h-1zM1447 425h1v1h-1zM1468 425h1v1h-1zM429 466h1v1h-1zM449 466h1v1h-1zM470 466h1v1h-1zM491 466h1v1h-1zM512 466h1v1h-1zM533 466h1v1h-1zM553 466h1v1h-1zM574 466h1v1h-1zM595 466h1v1h-1zM616 466h1v1h-1zM637 466h1v1h-1zM657 466h1v1h-1zM678 466h1v1h-1zM699 466h1v1h-1zM720 466h1v1h-1zM740 466h1v1h-1zM761 466h1v1h-1zM782 466h1v1h-1zM803 466h1v1h-1zM824 466h1v1h-1zM844 466h1v1h-1zM865 466h1v1h-1zM886 466h1v1h-1zM907 466h1v1h-1zM928 466h1v1h-1zM948 466h1v1h-1zM969 466h1v1h-1zM990 466h1v1h-1zM1011 466h1v1h-1zM1032 466h1v1h-1zM1052 466h1v1h-1zM1073 466h1v1h-1zM1094 466h1v1h-1zM1115 466h1v1h-1zM1135 466h1v1h-1zM1156 466h1v1h-1zM1177 466h1v1h-1zM1198 466h1v1h-1zM1219 466h1v1h-1zM1239 466h1v1h-1zM1260 466h1v1h-1zM1281 466h1v1h-1zM1302 466h1v1h-1zM1323 466h1v1h-1zM1343 466h1v1h-1zM1364 466h1v1h-1zM1385 466h1v1h-1zM1406 466h1v1h-1zM1427 466h1v1h-1zM1447 466h1v1h-1zM1468 466h1v1h-1zM429 508h1v1h-1zM449 508h1v1h-1zM470 508h1v1h-1zM491 508h1v1h-1zM512 508h1v1h-1zM533 508h1v1h-1zM553 508h1v1h-1zM574 508h1v1h-1zM595 508h1v1h-1zM616 508h1v1h-1zM637 508h1v1h-1zM657 508h1v1h-1zM678 508h1v1h-1zM699 508h1v1h-1zM720 508h1v1h-1zM740 508h1v1h-1zM761 508h1v1h-1zM782 508h1v1h-1zM803 508h1v1h-1zM824 508h1v1h-1zM844 508h1v1h-1zM865 508h1v1h-1zM886 508h1v1h-1zM907 508h1v1h-1zM928 508h1v1h-1zM948 508h1v1h-1zM969 508h1v1h-1zM990 508h1v1h-1zM1011 508h1v1h-1zM1032 508h1v1h-1zM1052 508h1v1h-1zM1073 508h1v1h-1zM1094 508h1v1h-1zM1115 508h1v1h-1zM1135 508h1v1h-1zM1156 508h1v1h-1zM1177 508h1v1h-1zM1198 508h1v1h-1zM1219 508h1v1h-1zM1239 508h1v1h-1zM1260 508h1v1h-1zM1281 508h1v1h-1zM1302 508h1v1h-1zM1323 508h1v1h-1zM1343 508h1v1h-1zM1364 508h1v1h-1zM1385 508h1v1h-1zM1406 508h1v1h-1zM1427 508h1v1h-1zM1447 508h1v1h-1zM1468 508h1v1h-1zM429 549h1v1h-1zM449 549h1v1h-1zM470 549h1v1h-1zM491 549h1v1h-1zM512 549h1v1h-1zM533 549h1v1h-1zM553 549h1v1h-1zM574 549h1v1h-1zM595 549h1v1h-1zM616 549h1v1h-1zM637 549h1v1h-1zM657 549h1v1h-1zM678 549h1v1h-1zM699 549h1v1h-1zM720 549h1v1h-1zM740 549h1v1h-1zM761 549h1v1h-1zM782 549h1v1h-1zM803 549h1v1h-1zM824 549h1v1h-1zM844 549h1v1h-1zM865 549h1v1h-1zM886 549h1v1h-1zM907 549h1v1h-1zM928 549h1v1h-1zM948 549h1v1h-1zM969 549h1v1h-1zM990 549h1v1h-1zM1011 549h1v1h-1zM1032 549h1v1h-1zM1052 549h1v1h-1zM1073 549h1v1h-1zM1094 549h1v1h-1zM1115 549h1v1h-1zM1135 549h1v1h-1zM1156 549h1v1h-1zM1177 549h1v1h-1zM1198 549h1v1h-1zM1219 549h1v1h-1zM1239 549h1v1h-1zM1260 549h1v1h-1zM1281 549h1v1h-1zM1302 549h1v1h-1zM1323 549h1v1h-1zM1343 549h1v1h-1zM1364 549h1v1h-1zM1385 549h1v1h-1zM1406 549h1v1h-1zM1427 549h1v1h-1zM1447 549h1v1h-1zM1468 549h1v1h-1zM429 591h1v1h-1zM449 591h1v1h-1zM470 591h1v1h-1zM491 591h1v1h-1zM512 591h1v1h-1zM533 591h1v1h-1zM553 591h1v1h-1zM574 591h1v1h-1zM595 591h1v1h-1zM616 591h1v1h-1zM637 591h1v1h-1zM657 591h1v1h-1zM678 591h1v1h-1zM699 591h1v1h-1zM720 591h1v1h-1zM740 591h1v1h-1zM761 591h1v1h-1zM782 591h1v1h-1zM803 591h1v1h-1zM824 591h1v1h-1zM844 591h1v1h-1zM865 591h1v1h-1zM886 591h1v1h-1zM907 591h1v1h-1zM928 591h1v1h-1zM948 591h1v1h-1zM969 591h1v1h-1zM990 591h1v1h-1zM1011 591h1v1h-1zM1032 591h1v1h-1zM1052 591h1v1h-1zM1073 591h1v1h-1zM1094 591h1v1h-1zM1115 591h1v1h-1zM1135 591h1v1h-1zM1156 591h1v1h-1zM1177 591h1v1h-1zM1198 591h1v1h-1zM1219 591h1v1h-1zM1239 591h1v1h-1zM1260 591h1v1h-1zM1281 591h1v1h-1zM1302 591h1v1h-1zM1323 591h1v1h-1zM1343 591h1v1h-1zM1364 591h1v1h-1zM1385 591h1v1h-1zM1406 591h1v1h-1zM1427 591h1v1h-1zM1447 591h1v1h-1zM1468 591h1v1h-1zM429 632h1v1h-1zM449 632h1v1h-1zM470 632h1v1h-1zM491 632h1v1h-1zM512 632h1v1h-1zM533 632h1v1h-1zM553 632h1v1h-1zM574 632h1v1h-1zM595 632h1v1h-1zM616 632h1v1h-1zM637 632h1v1h-1zM657 632h1v1h-1zM678 632h1v1h-1zM699 632h1v1h-1zM720 632h1v1h-1zM740 632h1v1h-1zM761 632h1v1h-1zM782 632h1v1h-1zM803 632h1v1h-1zM824 632h1v1h-1zM844 632h1v1h-1zM865 632h1v1h-1zM886 632h1v1h-1zM907 632h1v1h-1zM928 632h1v1h-1zM948 632h1v1h-1zM969 632h1v1h-1zM990 632h1v1h-1zM1011 632h1v1h-1zM1032 632h1v1h-1zM1052 632h1v1h-1zM1073 632h1v1h-1zM1094 632h1v1h-1zM1115 632h1v1h-1zM1135 632h1v1h-1zM1156 632h1v1h-1zM1177 632h1v1h-1zM1198 632h1v1h-1zM1219 632h1v1h-1zM1239 632h1v1h-1zM1260 632h1v1h-1zM1281 632h1v1h-1zM1302 632h1v1h-1zM1323 632h1v1h-1zM1343 632h1v1h-1zM1364 632h1v1h-1zM1385 632h1v1h-1zM1406 632h1v1h-1zM1427 632h1v1h-1zM1447 632h1v1h-1zM1468 632h1v1h-1zM429 674h1v1h-1zM449 674h1v1h-1zM470 674h1v1h-1zM491 674h1v1h-1zM512 674h1v1h-1zM533 674h1v1h-1zM553 674h1v1h-1zM574 674h1v1h-1zM595 674h1v1h-1zM616 674h1v1h-1zM637 674h1v1h-1zM657 674h1v1h-1zM678 674h1v1h-1zM699 674h1v1h-1zM720 674h1v1h-1zM740 674h1v1h-1zM761 674h1v1h-1zM782 674h1v1h-1zM803 674h1v1h-1zM824 674h1v1h-1zM844 674h1v1h-1zM865 674h1v1h-1zM886 674h1v1h-1zM907 674h1v1h-1zM928 674h1v1h-1zM948 674h1v1h-1zM969 674h1v1h-1zM990 674h1v1h-1zM1011 674h1v1h-1zM1032 674h1v1h-1zM1052 674h1v1h-1zM1073 674h1v1h-1zM1094 674h1v1h-1zM1115 674h1v1h-1zM1135 674h1v1h-1zM1156 674h1v1h-1zM1177 674h1v1h-1zM1198 674h1v1h-1zM1219 674h1v1h-1zM1239 674h1v1h-1zM1260 674h1v1h-1zM1281 674h1v1h-1zM1302 674h1v1h-1zM1323 674h1v1h-1zM1343 674h1v1h-1zM1364 674h1v1h-1zM1385 674h1v1h-1zM1406 674h1v1h-1zM1427 674h1v1h-1zM1447 674h1v1h-1zM1468 674h1v1h-1zM429 716h1v1h-1zM449 716h1v1h-1zM470 716h1v1h-1zM491 716h1v1h-1zM512 716h1v1h-1zM533 716h1v1h-1zM553 716h1v1h-1zM574 716h1v1h-1zM595 716h1v1h-1zM616 716h1v1h-1zM637 716h1v1h-1zM657 716h1v1h-1zM678 716h1v1h-1zM699 716h1v1h-1zM720 716h1v1h-1zM740 716h1v1h-1zM761 716h1v1h-1zM782 716h1v1h-1zM803 716h1v1h-1zM824 716h1v1h-1zM844 716h1v1h-1zM865 716h1v1h-1zM886 716h1v1h-1zM907 716h1v1h-1zM928 716h1v1h-1zM948 716h1v1h-1zM969 716h1v1h-1zM990 716h1v1h-1zM1011 716h1v1h-1zM1032 716h1v1h-1zM1052 716h1v1h-1zM1073 716h1v1h-1zM1094 716h1v1h-1zM1115 716h1v1h-1zM1135 716h1v1h-1zM1156 716h1v1h-1zM1177 716h1v1h-1zM1198 716h1v1h-1zM1219 716h1v1h-1zM1239 716h1v1h-1zM1260 716h1v1h-1zM1281 716h1v1h-1zM1302 716h1v1h-1zM1323 716h1v1h-1zM1343 716h1v1h-1zM1364 716h1v1h-1zM1385 716h1v1h-1zM1406 716h1v1h-1zM1427 716h1v1h-1zM1447 716h1v1h-1zM1468 716h1v1h-1zM429 757h1v1h-1zM449 757h1v1h-1zM470 757h1v1h-1zM491 757h1v1h-1zM512 757h1v1h-1zM533 757h1v1h-1zM553 757h1v1h-1zM574 757h1v1h-1zM595 757h1v1h-1zM616 757h1v1h-1zM637 757h1v1h-1zM657 757h1v1h-1zM678 757h1v1h-1zM699 757h1v1h-1zM720 757h1v1h-1zM740 757h1v1h-1zM761 757h1v1h-1zM782 757h1v1h-1zM803 757h1v1h-1zM824 757h1v1h-1zM844 757h1v1h-1zM865 757h1v1h-1zM886 757h1v1h-1zM907 757h1v1h-1zM928 757h1v1h-1zM948 757h1v1h-1zM969 757h1v1h-1zM990 757h1v1h-1zM1011 757h1v1h-1zM1032 757h1v1h-1zM1052 757h1v1h-1zM1073 757h1v1h-1zM1094 757h1v1h-1zM1115 757h1v1h-1zM1135 757h1v1h-1zM1156 757h1v1h-1zM1177 757h1v1h-1zM1198 757h1v1h-1zM1219 757h1v1h-1zM1239 757h1v1h-1zM1260 757h1v1h-1zM1281 757h1v1h-1zM1302 757h1v1h-1zM1323 757h1v1h-1zM1343 757h1v1h-1zM1364 757h1v1h-1zM1385 757h1v1h-1zM1406 757h1v1h-1zM1427 757h1v1h-1zM1447 757h1v1h-1zM1468 757h1v1h-1zM429 799h1v1h-1zM449 799h1v1h-1zM470 799h1v1h-1zM491 799h1v1h-1zM512 799h1v1h-1zM533 799h1v1h-1zM553 799h1v1h-1zM574 799h1v1h-1zM595 799h1v1h-1zM616 799h1v1h-1zM637 799h1v1h-1zM657 799h1v1h-1zM678 799h1v1h-1zM699 799h1v1h-1zM720 799h1v1h-1zM740 799h1v1h-1zM761 799h1v1h-1zM782 799h1v1h-1zM803 799h1v1h-1zM824 799h1v1h-1zM844 799h1v1h-1zM865 799h1v1h-1zM886 799h1v1h-1zM907 799h1v1h-1zM928 799h1v1h-1zM948 799h1v1h-1zM969 799h1v1h-1zM990 799h1v1h-1zM1011 799h1v1h-1zM1032 799h1v1h-1zM1052 799h1v1h-1zM1073 799h1v1h-1zM1094 799h1v1h-1zM1115 799h1v1h-1zM1135 799h1v1h-1zM1156 799h1v1h-1zM1177 799h1v1h-1zM1198 799h1v1h-1zM1219 799h1v1h-1zM1239 799h1v1h-1zM1260 799h1v1h-1zM1281 799h1v1h-1zM1302 799h1v1h-1zM1323 799h1v1h-1zM1343 799h1v1h-1zM1364 799h1v1h-1zM1385 799h1v1h-1zM1406 799h1v1h-1zM1427 799h1v1h-1zM1447 799h1v1h-1zM1468 799h1v1h-1zM429 840h1v1h-1zM449 840h1v1h-1zM470 840h1v1h-1zM491 840h1v1h-1zM512 840h1v1h-1zM533 840h1v1h-1zM553 840h1v1h-1zM574 840h1v1h-1zM595 840h1v1h-1zM616 840h1v1h-1zM637 840h1v1h-1zM657 840h1v1h-1zM678 840h1v1h-1zM699 840h1v1h-1zM720 840h1v1h-1zM740 840h1v1h-1zM761 840h1v1h-1zM782 840h1v1h-1zM803 840h1v1h-1zM824 840h1v1h-1zM844 840h1v1h-1zM865 840h1v1h-1zM886 840h1v1h-1zM907 840h1v1h-1zM928 840h1v1h-1zM948 840h1v1h-1zM969 840h1v1h-1zM990 840h1v1h-1zM1011 840h1v1h-1zM1032 840h1v1h-1zM1052 840h1v1h-1zM1073 840h1v1h-1zM1094 840h1v1h-1zM1115 840h1v1h-1zM1135 840h1v1h-1zM1156 840h1v1h-1zM1177 840h1v1h-1zM1198 840h1v1h-1zM1219 840h1v1h-1zM1239 840h1v1h-1zM1260 840h1v1h-1zM1281 840h1v1h-1zM1302 840h1v1h-1zM1323 840h1v1h-1zM1343 840h1v1h-1zM1364 840h1v1h-1zM1385 840h1v1h-1zM1406 840h1v1h-1zM1427 840h1v1h-1zM1447 840h1v1h-1zM1468 840h1v1h-1zM429 882h1v1h-1zM449 882h1v1h-1zM470 882h1v1h-1zM491 882h1v1h-1zM512 882h1v1h-1zM533 882h1v1h-1zM553 882h1v1h-1zM574 882h1v1h-1zM595 882h1v1h-1zM616 882h1v1h-1zM637 882h1v1h-1zM657 882h1v1h-1zM678 882h1v1h-1zM699 882h1v1h-1zM720 882h1v1h-1zM740 882h1v1h-1zM761 882h1v1h-1zM782 882h1v1h-1zM803 882h1v1h-1zM824 882h1v1h-1zM844 882h1v1h-1zM865 882h1v1h-1zM886 882h1v1h-1zM907 882h1v1h-1zM928 882h1v1h-1zM948 882h1v1h-1zM969 882h1v1h-1zM990 882h1v1h-1zM1011 882h1v1h-1zM1032 882h1v1h-1zM1052 882h1v1h-1zM1073 882h1v1h-1zM1094 882h1v1h-1zM1115 882h1v1h-1zM1135 882h1v1h-1zM1156 882h1v1h-1zM1177 882h1v1h-1zM1198 882h1v1h-1zM1219 882h1v1h-1zM1239 882h1v1h-1zM1260 882h1v1h-1zM1281 882h1v1h-1zM1302 882h1v1h-1zM1323 882h1v1h-1zM1343 882h1v1h-1zM1364 882h1v1h-1zM1385 882h1v1h-1zM1406 882h1v1h-1zM1427 882h1v1h-1zM1447 882h1v1h-1zM1468 882h1v1h-1zM429 924h1v1h-1zM449 924h1v1h-1zM470 924h1v1h-1zM491 924h1v1h-1zM512 924h1v1h-1zM533 924h1v1h-1zM553 924h1v1h-1zM574 924h1v1h-1zM595 924h1v1h-1zM616 924h1v1h-1zM637 924h1v1h-1zM657 924h1v1h-1zM678 924h1v1h-1zM699 924h1v1h-1zM720 924h1v1h-1zM740 924h1v1h-1zM761 924h1v1h-1zM782 924h1v1h-1zM803 924h1v1h-1zM824 924h1v1h-1zM844 924h1v1h-1zM865 924h1v1h-1zM886 924h1v1h-1zM907 924h1v1h-1zM928 924h1v1h-1zM948 924h1v1h-1zM969 924h1v1h-1zM990 924h1v1h-1zM1011 924h1v1h-1zM1032 924h1v1h-1zM1052 924h1v1h-1zM1073 924h1v1h-1zM1094 924h1v1h-1zM1115 924h1v1h-1zM1135 924h1v1h-1zM1156 924h1v1h-1zM1177 924h1v1h-1zM1198 924h1v1h-1zM1219 924h1v1h-1zM1239 924h1v1h-1zM1260 924h1v1h-1zM1281 924h1v1h-1zM1302 924h1v1h-1zM1323 924h1v1h-1zM1343 924h1v1h-1zM1364 924h1v1h-1zM1385 924h1v1h-1zM1406 924h1v1h-1zM1427 924h1v1h-1zM1447 924h1v1h-1zM1468 924h1v1h-1zM429 965h1v1h-1zM449 965h1v1h-1zM470 965h1v1h-1zM491 965h1v1h-1zM512 965h1v1h-1zM533 965h1v1h-1zM553 965h1v1h-1zM574 965h1v1h-1zM595 965h1v1h-1zM616 965h1v1h-1zM637 965h1v1h-1zM657 965h1v1h-1zM678 965h1v1h-1zM699 965h1v1h-1zM720 965h1v1h-1zM740 965h1v1h-1zM761 965h1v1h-1zM782 965h1v1h-1zM803 965h1v1h-1zM824 965h1v1h-1zM844 965h1v1h-1zM865 965h1v1h-1zM886 965h1v1h-1zM907 965h1v1h-1zM928 965h1v1h-1zM948 965h1v1h-1zM969 965h1v1h-1zM990 965h1v1h-1zM1011 965h1v1h-1zM1032 965h1v1h-1zM1052 965h1v1h-1zM1073 965h1v1h-1zM1094 965h1v1h-1zM1115 965h1v1h-1zM1135 965h1v1h-1zM1156 965h1v1h-1zM1177 965h1v1h-1zM1198 965h1v1h-1zM1219 965h1v1h-1zM1239 965h1v1h-1zM1260 965h1v1h-1zM1281 965h1v1h-1zM1302 965h1v1h-1zM1323 965h1v1h-1zM1343 965h1v1h-1zM1364 965h1v1h-1zM1385 965h1v1h-1zM1406 965h1v1h-1zM1427 965h1v1h-1zM1447 965h1v1h-1zM1468 965h1v1h-1zM449 362h1v1h-1zM491 362h1v1h-1zM533 362h1v1h-1zM574 362h1v1h-1zM616 362h1v1h-1zM657 362h1v1h-1zM699 362h1v1h-1zM740 362h1v1h-1zM782 362h1v1h-1zM824 362h1v1h-1zM865 362h1v1h-1zM907 362h1v1h-1zM948 362h1v1h-1zM990 362h1v1h-1zM1032 362h1v1h-1zM1073 362h1v1h-1zM1115 362h1v1h-1zM1156 362h1v1h-1zM1198 362h1v1h-1zM1239 362h1v1h-1zM1281 362h1v1h-1zM1323 362h1v1h-1zM1364 362h1v1h-1zM1406 362h1v1h-1zM1447 362h1v1h-1zM449 404h1v1h-1zM491 404h1v1h-1zM533 404h1v1h-1zM574 404h1v1h-1zM616 404h1v1h-1zM657 404h1v1h-1zM699 404h1v1h-1zM740 404h1v1h-1zM782 404h1v1h-1zM824 404h1v1h-1zM865 404h1v1h-1zM907 404h1v1h-1zM948 404h1v1h-1zM990 404h1v1h-1zM1032 404h1v1h-1zM1073 404h1v1h-1zM1115 404h1v1h-1zM1156 404h1v1h-1zM1198 404h1v1h-1zM1239 404h1v1h-1zM1281 404h1v1h-1zM1323 404h1v1h-1zM1364 404h1v1h-1zM1406 404h1v1h-1zM1447 404h1v1h-1zM449 445h1v1h-1zM491 445h1v1h-1zM533 445h1v1h-1zM574 445h1v1h-1zM616 445h1v1h-1zM657 445h1v1h-1zM699 445h1v1h-1zM740 445h1v1h-1zM782 445h1v1h-1zM824 445h1v1h-1zM865 445h1v1h-1zM907 445h1v1h-1zM948 445h1v1h-1zM990 445h1v1h-1zM1032 445h1v1h-1zM1073 445h1v1h-1zM1115 445h1v1h-1zM1156 445h1v1h-1zM1198 445h1v1h-1zM1239 445h1v1h-1zM1281 445h1v1h-1zM1323 445h1v1h-1zM1364 445h1v1h-1zM1406 445h1v1h-1zM1447 445h1v1h-1zM449 487h1v1h-1zM491 487h1v1h-1zM533 487h1v1h-1zM574 487h1v1h-1zM616 487h1v1h-1zM657 487h1v1h-1zM699 487h1v1h-1zM740 487h1v1h-1zM782 487h1v1h-1zM824 487h1v1h-1zM865 487h1v1h-1zM907 487h1v1h-1zM948 487h1v1h-1zM990 487h1v1h-1zM1032 487h1v1h-1zM1073 487h1v1h-1zM1115 487h1v1h-1zM1156 487h1v1h-1zM1198 487h1v1h-1zM1239 487h1v1h-1zM1281 487h1v1h-1zM1323 487h1v1h-1zM1364 487h1v1h-1zM1406 487h1v1h-1zM1447 487h1v1h-1zM449 529h1v1h-1zM491 529h1v1h-1zM533 529h1v1h-1zM574 529h1v1h-1zM616 529h1v1h-1zM657 529h1v1h-1zM699 529h1v1h-1zM740 529h1v1h-1zM782 529h1v1h-1zM824 529h1v1h-1zM865 529h1v1h-1zM907 529h1v1h-1zM948 529h1v1h-1zM990 529h1v1h-1zM1032 529h1v1h-1zM1073 529h1v1h-1zM1115 529h1v1h-1zM1156 529h1v1h-1zM1198 529h1v1h-1zM1239 529h1v1h-1zM1281 529h1v1h-1zM1323 529h1v1h-1zM1364 529h1v1h-1zM1406 529h1v1h-1zM1447 529h1v1h-1zM449 570h1v1h-1zM491 570h1v1h-1zM533 570h1v1h-1zM574 570h1v1h-1zM616 570h1v1h-1zM657 570h1v1h-1zM699 570h1v1h-1zM740 570h1v1h-1zM782 570h1v1h-1zM824 570h1v1h-1zM865 570h1v1h-1zM907 570h1v1h-1zM948 570h1v1h-1zM990 570h1v1h-1zM1032 570h1v1h-1zM1073 570h1v1h-1zM1115 570h1v1h-1zM1156 570h1v1h-1zM1198 570h1v1h-1zM1239 570h1v1h-1zM1281 570h1v1h-1zM1323 570h1v1h-1zM1364 570h1v1h-1zM1406 570h1v1h-1zM1447 570h1v1h-1zM449 612h1v1h-1zM491 612h1v1h-1zM533 612h1v1h-1zM574 612h1v1h-1zM616 612h1v1h-1zM657 612h1v1h-1zM699 612h1v1h-1zM740 612h1v1h-1zM782 612h1v1h-1zM824 612h1v1h-1zM865 612h1v1h-1zM907 612h1v1h-1zM948 612h1v1h-1zM990 612h1v1h-1zM1032 612h1v1h-1zM1073 612h1v1h-1zM1115 612h1v1h-1zM1156 612h1v1h-1zM1198 612h1v1h-1zM1239 612h1v1h-1zM1281 612h1v1h-1zM1323 612h1v1h-1zM1364 612h1v1h-1zM1406 612h1v1h-1zM1447 612h1v1h-1zM449 653h1v1h-1zM491 653h1v1h-1zM533 653h1v1h-1zM574 653h1v1h-1zM616 653h1v1h-1zM657 653h1v1h-1zM699 653h1v1h-1zM740 653h1v1h-1zM782 653h1v1h-1zM824 653h1v1h-1zM865 653h1v1h-1zM907 653h1v1h-1zM948 653h1v1h-1zM990 653h1v1h-1zM1032 653h1v1h-1zM1073 653h1v1h-1zM1115 653h1v1h-1zM1156 653h1v1h-1zM1198 653h1v1h-1zM1239 653h1v1h-1zM1281 653h1v1h-1zM1323 653h1v1h-1zM1364 653h1v1h-1zM1406 653h1v1h-1zM1447 653h1v1h-1zM449 695h1v1h-1zM491 695h1v1h-1zM533 695h1v1h-1zM574 695h1v1h-1zM616 695h1v1h-1zM657 695h1v1h-1zM699 695h1v1h-1zM740 695h1v1h-1zM782 695h1v1h-1zM824 695h1v1h-1zM865 695h1v1h-1zM907 695h1v1h-1zM948 695h1v1h-1zM990 695h1v1h-1zM1032 695h1v1h-1zM1073 695h1v1h-1zM1115 695h1v1h-1zM1156 695h1v1h-1zM1198 695h1v1h-1zM1239 695h1v1h-1zM1281 695h1v1h-1zM1323 695h1v1h-1zM1364 695h1v1h-1zM1406 695h1v1h-1zM1447 695h1v1h-1zM449 736h1v1h-1zM491 736h1v1h-1zM533 736h1v1h-1zM574 736h1v1h-1zM616 736h1v1h-1zM657 736h1v1h-1zM699 736h1v1h-1zM740 736h1v1h-1zM782 736h1v1h-1zM824 736h1v1h-1zM865 736h1v1h-1zM907 736h1v1h-1zM948 736h1v1h-1zM990 736h1v1h-1zM1032 736h1v1h-1zM1073 736h1v1h-1zM1115 736h1v1h-1zM1156 736h1v1h-1zM1198 736h1v1h-1zM1239 736h1v1h-1zM1281 736h1v1h-1zM1323 736h1v1h-1zM1364 736h1v1h-1zM1406 736h1v1h-1zM1447 736h1v1h-1zM449 778h1v1h-1zM491 778h1v1h-1zM533 778h1v1h-1zM574 778h1v1h-1zM616 778h1v1h-1zM657 778h1v1h-1zM699 778h1v1h-1zM740 778h1v1h-1zM782 778h1v1h-1zM824 778h1v1h-1zM865 778h1v1h-1zM907 778h1v1h-1zM948 778h1v1h-1zM990 778h1v1h-1zM1032 778h1v1h-1zM1073 778h1v1h-1zM1115 778h1v1h-1zM1156 778h1v1h-1zM1198 778h1v1h-1zM1239 778h1v1h-1zM1281 778h1v1h-1zM1323 778h1v1h-1zM1364 778h1v1h-1zM1406 778h1v1h-1zM1447 778h1v1h-1zM449 820h1v1h-1zM491 820h1v1h-1zM533 820h1v1h-1zM574 820h1v1h-1zM616 820h1v1h-1zM657 820h1v1h-1zM699 820h1v1h-1zM740 820h1v1h-1zM782 820h1v1h-1zM824 820h1v1h-1zM865 820h1v1h-1zM907 820h1v1h-1zM948 820h1v1h-1zM990 820h1v1h-1zM1032 820h1v1h-1zM1073 820h1v1h-1zM1115 820h1v1h-1zM1156 820h1v1h-1zM1198 820h1v1h-1zM1239 820h1v1h-1zM1281 820h1v1h-1zM1323 820h1v1h-1zM1364 820h1v1h-1zM1406 820h1v1h-1zM1447 820h1v1h-1zM449 861h1v1h-1zM491 861h1v1h-1zM533 861h1v1h-1zM574 861h1v1h-1zM616 861h1v1h-1zM657 861h1v1h-1zM699 861h1v1h-1zM740 861h1v1h-1zM782 861h1v1h-1zM824 861h1v1h-1zM865 861h1v1h-1zM907 861h1v1h-1zM948 861h1v1h-1zM990 861h1v1h-1zM1032 861h1v1h-1zM1073 861h1v1h-1zM1115 861h1v1h-1zM1156 861h1v1h-1zM1198 861h1v1h-1zM1239 861h1v1h-1zM1281 861h1v1h-1zM1323 861h1v1h-1zM1364 861h1v1h-1zM1406 861h1v1h-1zM1447 861h1v1h-1zM449 903h1v1h-1zM491 903h1v1h-1zM533 903h1v1h-1zM574 903h1v1h-1zM616 903h1v1h-1zM657 903h1v1h-1zM699 903h1v1h-1zM740 903h1v1h-1zM782 903h1v1h-1zM824 903h1v1h-1zM865 903h1v1h-1zM907 903h1v1h-1zM948 903h1v1h-1zM990 903h1v1h-1zM1032 903h1v1h-1zM1073 903h1v1h-1zM1115 903h1v1h-1zM1156 903h1v1h-1zM1198 903h1v1h-1zM1239 903h1v1h-1zM1281 903h1v1h-1zM1323 903h1v1h-1zM1364 903h1v1h-1zM1406 903h1v1h-1zM1447 903h1v1h-1zM449 944h1v1h-1zM491 944h1v1h-1zM533 944h1v1h-1zM574 944h1v1h-1zM616 944h1v1h-1zM657 944h1v1h-1zM699 944h1v1h-1zM740 944h1v1h-1zM782 944h1v1h-1zM824 944h1v1h-1zM865 944h1v1h-1zM907 944h1v1h-1zM948 944h1v1h-1zM990 944h1v1h-1zM1032 944h1v1h-1zM1073 944h1v1h-1zM1115 944h1v1h-1zM1156 944h1v1h-1zM1198 944h1v1h-1zM1239 944h1v1h-1zM1281 944h1v1h-1zM1323 944h1v1h-1zM1364 944h1v1h-1zM1406 944h1v1h-1zM1447 944h1v1h-1zM449 986h1v1h-1zM491 986h1v1h-1zM533 986h1v1h-1zM574 986h1v1h-1zM616 986h1v1h-1zM657 986h1v1h-1zM699 986h1v1h-1zM740 986h1v1h-1zM782 986h1v1h-1zM824 986h1v1h-1zM865 986h1v1h-1zM907 986h1v1h-1zM948 986h1v1h-1zM990 986h1v1h-1zM1032 986h1v1h-1zM1073 986h1v1h-1zM1115 986h1v1h-1zM1156 986h1v1h-1zM1198 986h1v1h-1zM1239 986h1v1h-1zM1281 986h1v1h-1zM1323 986h1v1h-1zM1364 986h1v1h-1zM1406 986h1v1h-1zM1447 986h1v1h-1zM408 341h1v1h-1zM429 341h1v1h-1zM449 341h1v1h-1zM470 341h1v1h-1zM491 341h1v1h-1zM512 341h1v1h-1zM533 341h1v1h-1zM553 341h1v1h-1zM574 341h1v1h-1zM595 341h1v1h-1zM616 341h1v1h-1zM637 341h1v1h-1zM657 341h1v1h-1zM678 341h1v1h-1zM699 341h1v1h-1zM720 341h1v1h-1zM740 341h1v1h-1zM761 341h1v1h-1zM782 341h1v1h-1zM803 341h1v1h-1zM824 341h1v1h-1zM844 341h1v1h-1zM865 341h1v1h-1zM886 341h1v1h-1zM907 341h1v1h-1zM928 341h1v1h-1zM948 341h1v1h-1zM969 341h1v1h-1zM990 341h1v1h-1zM1011 341h1v1h-1zM1032 341h1v1h-1zM1052 341h1v1h-1zM1073 341h1v1h-1zM1094 341h1v1h-1zM1115 341h1v1h-1zM1135 341h1v1h-1zM1156 341h1v1h-1zM1177 341h1v1h-1zM1198 341h1v1h-1zM1219 341h1v1h-1zM1239 341h1v1h-1zM1260 341h1v1h-1zM1281 341h1v1h-1zM1302 341h1v1h-1zM1323 341h1v1h-1zM1343 341h1v1h-1zM1364 341h1v1h-1zM1385 341h1v1h-1zM1406 341h1v1h-1zM1427 341h1v1h-1zM1447 341h1v1h-1zM1468 341h1v1h-1z"/></svg>
</div></div>

<!-- ========== V SCROLLBAR & SIDEBAR ========== -->
<div class="a" style="left:1856px;top:110px;width:1px;height:890px;background:#fff"></div>
<div class="a" style="left:1857px;top:110px;width:17px;height:908px;background:#efefef"></div>
<div class="a" style="left:1857px;top:555px;width:15px;height:313px;background:#cdcdcd"></div>
<div class="a" style="left:1874px;top:108px;width:1px;height:910px;background:#fff"></div>
<div class="a" style="left:1875px;top:108px;width:44px;height:910px;background:#efefef"></div>
<div class="a" style="left:1875px;top:108px;width:44px;height:1px;background:#a8a8a8"></div>
<div class="a" style="left:1880px;top:108px;width:1px;height:910px;background:#999"></div>
<div class="a" style="left:1881px;top:109px;width:1px;height:909px;background:#fff"></div>
<div class="a" style="left:1918px;top:108px;width:1px;height:910px;background:#a0a0a0"></div>
<div class="a" style="left:1875px;top:1017px;width:44px;height:1px;background:#a0a0a0"></div>
<svg width="64" height="910" viewBox="1856 108 64 910" style="left:1856px;top:108px">
<defs><radialGradient id="navb" cx="0.4" cy="0.35" r="0.7"><stop offset="0" stop-color="#a8c8e8"/><stop offset="1" stop-color="#3a6a9a"/></radialGradient></defs>
<path d="M1861 121.5l3.5-4l3.5 4" stroke="#555" stroke-width="1.6" fill="none"/>
<path d="M1861 938.5l3.5 4l3.5-4" stroke="#555" stroke-width="1.6" fill="none"/>
<rect x="1857.5" y="950.5" width="14" height="14" fill="#e6e6e6" stroke="#b8b8b8"/>
<rect x="1857.5" y="967.5" width="14" height="14" fill="#e6e6e6" stroke="#b8b8b8"/>
<rect x="1857.5" y="984.5" width="14" height="14" fill="#e6e6e6" stroke="#b8b8b8"/>
<path d="M1860.5 957h8l-4-4zM1860.5 962h8l-4-4z" fill="#000"/>
<circle cx="1864.5" cy="974.5" r="3.8" fill="url(#navb)" stroke="#1a3a5a" stroke-width="0.9"/>
<path d="M1860.5 987h8l-4 4zM1860.5 992h8l-4 4z" fill="#000"/>
<!-- grip arrows on sidebar splitter -->
<g fill="#555"><path d="M1876 545l3 2l-3 2z"/><path d="M1876 553h3l-3 2z"/><path d="M1876 557h3l-3 2z"/><path d="M1876 561h3l-3 2z"/><path d="M1876 565h3l-3 2z"/><path d="M1876 569h3l-3 2z"/><path d="M1876 576l3 2l-3 2z"/></g>
<!-- sidebar menu icon -->
<path d="M1896 124.5h6M1896 126.5h6M1896 128.5h6" stroke="#1a2a4a" stroke-width="1"/>
<path d="M1899.5 130h6l-3 3z" fill="#1a2a4a"/>
<rect x="1889" y="147" width="23" height="1" fill="#d8d8d8"/>
<rect x="1884.5" y="151.5" width="31" height="31" rx="4" fill="#efefef" stroke="#a8a8a8"/>
<!-- cube icon -->
<ellipse cx="1900" cy="177" rx="8.5" ry="1.8" fill="#bcbcbc" opacity="0.8"/>
<path d="M1890 160l9.5 3.5v12.5l-9.5-4z" fill="#0c94f4"/>
<path d="M1899.5 163.5l9.5-3.5v12l-9.5 4z" fill="#6cd410"/>
<path d="M1890 160l9.5-4l9.5 4l-9.5 3.5z" fill="#18a8ec"/>
<path d="M1899.5 163.5l4.75-1.75l4.75-1.75l-4.75-2l-4.75 2z" fill="#74dc18"/>
<path d="M1894.75 167.75l4.75 1.75v6.5l-4.75-2z" fill="#74dc18"/>
<path d="M1890 166l9.5 3.5l9.5-3.5M1894.75 162v12M1904.25 162v12M1894.75 158l9.5 3.75M1904.25 158l-9.5 3.75M1899.5 163.5v12.5" stroke="#f4f8f4" stroke-width="0.8" fill="none"/>
<!-- styles icon (swirl) -->
<ellipse cx="1900" cy="211" rx="8" ry="1.8" fill="#c8c8c8"/>
<path d="M1893 209l4-14l8 9z" fill="#2a88e0"/>
<path d="M1894 199c2-6 10-6 11 0c1 4-3 6-5 4" fill="#0a2a4a"/>
<path d="M1892 197c1-4 5-4 6-1" stroke="#d87010" stroke-width="2.6" fill="none"/>
<path d="M1899 206c3 3 8 2 8-3" stroke="#70b030" stroke-width="3" fill="none"/>
<path d="M1908 191l1 2h2l-1.5 1.5l0.5 2l-2-1l-2 1l0.5-2l-1.5-1.5h2z" fill="#f8c030"/>
<circle cx="1902" cy="192" r="2" fill="#c060e0"/><circle cx="1891" cy="200" r="2" fill="#f060b0"/><circle cx="1909" cy="202" r="2" fill="#f04050"/>
<!-- gallery icon -->
<ellipse cx="1901" cy="246" rx="8" ry="1.6" fill="#cfcfcf"/>
<path d="M1888 232l17-7l7 12l-17 7z" fill="#fff" stroke="#9a9a9a" stroke-width="0.8"/>
<path d="M1890.5 233l13.5-5.5l5 9l-13.5 5.5z" fill="#78c0f0"/>
<path d="M1893 239l13-5l3 2.5l-13 5.5z" fill="#58a830"/>
<path d="M1894 236l3.5-3l3 3v3.5h-6.5z" fill="#fff" stroke="#1a3a8a" stroke-width="1"/>
<path d="M1890 232l4-1.5" stroke="#70d020" stroke-width="1.5"/>
<!-- navigator compass -->
<ellipse cx="1900" cy="282" rx="8" ry="1.6" fill="#cfcfcf"/>
<circle cx="1900" cy="271.5" r="9.5" fill="#f8f8f8" stroke="#f09010" stroke-width="2.6"/>
<path d="M1905.5 265.5l-4.5 7l-2-2z" fill="#e03030"/><path d="M1894.5 277.5l4.5-7l2 2z" fill="#3a70d8"/>
<path d="M1891.5 271.5h3M1905.5 271.5h3M1900 277v3" stroke="#c8c8c8" stroke-width="0.8"/>
<text x="1900" y="267.5" font-size="6" font-weight="bold" text-anchor="middle" font-family="Liberation Sans" fill="#222">N</text>
</svg>

<!-- ========== H SCROLLBAR ========== -->
<div class="a" style="left:2px;top:1000px;width:1855px;height:17px;background:#efefef"></div>
<div class="a" style="left:2px;top:1000px;width:1854px;height:1px;background:#fff"></div>
<div class="a" style="left:18px;top:1001px;width:1821px;height:15px;background:#cdcdcd"></div>
<div class="a" style="left:0;top:1017px;width:1880px;height:1px;background:#fff"></div>
<svg width="1880" height="18" viewBox="0 1000 1880 18" style="left:0;top:1000px">
<path d="M11.5 1005l-4 3.5l4 3.5" stroke="#555" stroke-width="1.6" fill="none"/>
<path d="M1845.5 1005l4 3.5l-4 3.5" stroke="#555" stroke-width="1.6" fill="none"/>
</svg>

<!-- ========== STATUS BAR ========== -->
<div class="a" style="left:0;top:1018px;width:1920px;height:22px;background:#f0f0f0"></div>
<!-- ========== STATUS BAR CONTENT ========== -->
<div class="t" style="left:10px;top:1024px;letter-spacing:-0.3px">Seite 2 / 2</div>
<div class="t" style="left:353px;top:1024px">Querformat</div>
<div class="t" style="left:845px;top:1024px;letter-spacing:-0.12px">Deutsch (Deutschland)</div>
<div class="t" style="left:1117px;top:1024px;font-size:11px;letter-spacing:-0.3px">EINFG</div>
<div class="t" style="left:1162px;top:1024px;font-size:11px;letter-spacing:-0.2px">STD</div>
<div class="t" style="left:1194px;top:1024px">*</div>
<div class="t" style="left:1879px;top:1024px;font-size:11.5px">110 %</div>
<svg width="1920" height="22" viewBox="0 1018 1920 22" style="left:0;top:1018px">
<g fill="#a8a8a8"><rect x="347" y="1022" width="1" height="15"/><rect x="701" y="1022" width="1" height="15"/><rect x="1112" y="1022" width="1" height="15"/><rect x="1157" y="1022" width="1" height="15"/><rect x="1190" y="1022" width="1" height="15"/><rect x="1206" y="1022" width="1" height="15"/><rect x="1235" y="1022" width="1" height="15"/><rect x="1655" y="1022" width="1" height="15"/><rect x="1731" y="1022" width="1" height="15"/><rect x="1874" y="1022" width="1" height="15"/></g>
<!-- layout icons -->
<path d="M1663.5 1024.5h6l2.5 2.5v7.5h-8.5z" fill="#fafafa" stroke="#909aa4"/>
<path d="M1678.5 1024.5h6l2.5 2.5v7.5h-8.5zM1688.5 1024.5h6l2.5 2.5v7.5h-8.5z" fill="#dce8f4" stroke="#2a5a9a"/>
<path d="M1703.5 1025.5l2-1h6v10h-8zM1712 1024.5h6l1.5 1v9h-7.5z" fill="#fafafa" stroke="#909aa4"/>
<!-- zoom -->
<circle cx="1742.5" cy="1030.5" r="5" fill="#dce8f4" stroke="#4a6a8a" stroke-width="1.1"/>
<path d="M1740 1030.5h5" stroke="#2a4a7a" stroke-width="1.3"/>
<rect x="1753" y="1029" width="97" height="1" fill="#8a8a8a"/>
<rect x="1787" y="1026" width="1" height="7" fill="#8a8a8a"/>
<circle cx="1801" cy="1030" r="3.6" fill="#7aa6d0" stroke="#3a5a7a" stroke-width="0.9"/>
<circle cx="1860.5" cy="1030.5" r="5.3" fill="#dce8f4" stroke="#4a6a8a" stroke-width="1.1"/>
<path d="M1858 1030.5h5M1860.5 1028v5" stroke="#2a4a7a" stroke-width="1.3"/>
</svg>


<!-- ========== TASKBAR ========== -->
<div class="a" style="left:0;top:1040px;width:1920px;height:40px;background:#1e2d33"></div>
<!-- taskbar content -->
<div class="a" style="left:48px;top:1040px;width:288px;height:40px;background:#333;border:1px solid #5c5c5c;border-bottom:none"></div>
<div class="a" style="left:730px;top:1040px;width:48px;height:40px;background:#4a5459"></div>
<div class="a" style="left:730px;top:1078px;width:48px;height:2px;background:#99d8f0"></div>
<div class="a" style="left:538px;top:1078px;width:31px;height:2px;background:#99d8f0"></div>
<div class="a" style="left:570px;top:1078px;width:8px;height:2px;background:#6a9aaa"></div>
<div class="a" style="left:1510px;top:1042px;width:364px;height:37px;background:#000"></div>
<div class="a" style="left:1915px;top:1040px;width:1px;height:40px;background:#6a7378"></div>
<div class="a" style="left:449px;top:1048px;width:22px;height:24px;border-radius:5px;background:#e8e8e8;border:1px solid #555"></div>
<div class="a" style="left:451px;top:1050px;width:18px;height:20px;border-radius:3px;background:radial-gradient(circle at 55% 50%,#fff 0,rgba(255,255,255,0.7) 20%,rgba(255,255,255,0) 60%),conic-gradient(from 0deg at 55% 50%,#ffff30,#ff3020 25%,#ff20c0 40%,#3020ff 60%,#00c0ff 75%,#30e040 88%,#ffff30)"></div>
<div class="t" style="left:88px;top:1051px;font-size:15px;line-height:18px;color:#e8e8e8;letter-spacing:-0.7px">Suchen</div>
<svg width="1920" height="40" viewBox="0 1040 1920 40" style="left:0;top:1040px">
<defs>
<linearGradient id="plr" x1="0.2" y1="0" x2="0.8" y2="1"><stop offset="0" stop-color="#f09040"/><stop offset="0.5" stop-color="#d07aa0"/><stop offset="1" stop-color="#a070e0"/></linearGradient>
<linearGradient id="edge1" x1="0" y1="0.2" x2="1" y2="0.6"><stop offset="0" stop-color="#28b4f0"/><stop offset="0.55" stop-color="#38c8b0"/><stop offset="1" stop-color="#60e040"/></linearGradient>
<radialGradient id="clr" cx="0.55" cy="0.5" r="0.6"><stop offset="0" stop-color="#fff"/><stop offset="0.5" stop-color="#f040a0"/><stop offset="1" stop-color="#2020e0"/></radialGradient>
<linearGradient id="clr2" x1="0" y1="0" x2="1" y2="0"><stop offset="0" stop-color="#00c0ff"/><stop offset="0.3" stop-color="#30e040"/><stop offset="0.6" stop-color="#ffff40"/><stop offset="1" stop-color="#ff2020"/></linearGradient>
</defs>
<!-- windows logo -->
<g fill="#fff"><path d="M16 1053.5l7-1v7h-7zM24 1052.3l8-1.1v8.3h-8zM16 1060.5h7v7l-7-1zM24 1060.5h8v8.3l-8-1.1z"/></g>
<!-- search icon -->
<circle cx="70.5" cy="1058.5" r="5.5" fill="none" stroke="#e0e0e0" stroke-width="1.3"/>
<path d="M66.5 1062.5l-6 6" stroke="#e0e0e0" stroke-width="1.5"/>
<!-- task view -->
<g fill="none" stroke="#fff" stroke-width="1.3"><path d="M352 1052.5h11M352 1066.5h11M354 1055.5h8v8h-8z"/><path d="M367 1052v15"/></g>
<rect x="366" y="1055" width="2" height="3" fill="#fff"/>
<!-- explorer -->
<path d="M400 1052h7l2 2h12v14h-21z" fill="#f0c040"/>
<rect x="400" y="1055" width="21" height="13" fill="#fcd860"/>
<path d="M404 1068v-6h13v6h-3v-3h-7v3z" fill="#2a8ae0"/>
<!-- color app -->

<!-- dark app -->
<rect x="498" y="1048" width="21" height="21" rx="2" fill="#3a3533"/>
<rect x="501" y="1053" width="15" height="4" rx="2" fill="#d8d8d8"/>
<rect x="501" y="1060" width="15" height="4" rx="2" fill="#909090"/>
<circle cx="503" cy="1062" r="2" fill="#e8e8e8"/>
<!-- chrome -->
<circle cx="558" cy="1060" r="12" fill="#dd4433"/>
<path d="M558 1060l-10.4 6a12 12 0 0 0 10.4 6z" fill="#1e9e50"/>
<path d="M558 1060h12a12 12 0 0 1-12 12z" fill="#f8c018"/>
<path d="M558 1060l-10.4 6a12 12 0 0 1 0-12z" fill="#1e9e50"/>
<circle cx="558" cy="1060" r="5.5" fill="#fff"/><circle cx="558" cy="1060" r="4.3" fill="#3a80f0"/>
<!-- edge -->
<circle cx="607" cy="1060" r="12" fill="url(#edge1)"/>
<path d="M595 1059.5a12 12 0 0 0 22 6.8c-4.5 2.2-10.5 1.8-13.5-1.8c-2.5-3-1.5-7.5 2.5-8.5c2.5-0.6 5 0.6 5.5 3c0.2-5-8-8.5-13.5-4.5c-1.6 1.2-2.6 3-3 5z" fill="#1a66c8"/>
<circle cx="608" cy="1060.5" r="2.6" fill="#1e2d33"/>
<path d="M619 1063c-1.5 1.8-3.5 2.8-6 3c-2.5 0.2-4.5-0.5-5.5-1.5c3 0.5 8 0 11.5-1.5z" fill="#1e2d33"/>
<!-- player -->
<circle cx="656" cy="1060" r="11" fill="#2e2e2e" stroke="url(#plr)" stroke-width="1.8"/>
<path d="M652 1054v12l10-6z" fill="#eee"/>
<!-- red gear -->
<circle cx="705" cy="1060" r="10.8" fill="#141414" stroke="#e02424" stroke-width="1.6"/>
<g transform="translate(702.5 1061) scale(0.62)"><path d="M-1.2-6h2.4l0.5 2l1.8 0.8l1.8-1.1l1.7 1.7l-1.1 1.8l0.8 1.8l2 0.5v2.4l-2 0.5l-0.8 1.8l1.1 1.8l-1.7 1.7l-1.8-1.1l-1.8 0.8l-0.5 2h-2.4l-0.5-2l-1.8-0.8l-1.8 1.1l-1.7-1.7l1.1-1.8l-0.8-1.8l-2-0.5v-2.4l2-0.5l0.8-1.8l-1.1-1.8l1.7-1.7l1.8 1.1l1.8-0.8z" fill="#e82828"/><circle r="2.6" fill="#141414"/></g>
<path d="M705 1066l5.5-6.5" stroke="#e82828" stroke-width="2.2"/>
<path d="M708 1056h4.5v4.5z" fill="#e82828"/>
<!-- openoffice -->
<circle cx="754" cy="1060" r="11.5" fill="#1a88d8"/>
<path d="M745 1066c4-3 9-2 12 0c2-2 5-3 7-2c-3 0-5 2-7 4c-3-2-8-3-12-2z" fill="#fff"/>
<path d="M750 1063c3-2 6-1 8 0c1-1 3-2 5-1c-2 0-3 1-5 2c-2-1-5-2-8-1z" fill="#fff"/>
<path d="M754 1054c2-1 4 0 5 1c1-1 2-1 3-1c-1 0-2 1-3 2c-1-1-3-2-5-2z" fill="#fff"/>
<!-- notification -->
<path d="M1889 1064.5h-6l3 3M1882.5 1064.5h-3v-12h15v8" fill="none" stroke="#fff" stroke-width="1.1"/>
<circle cx="1892" cy="1065" r="3.2" fill="#fff"/><circle cx="1890.2" cy="1063.4" r="2.6" fill="#1e2d33"/>
</svg>



<!-- ========== DIALOG ========== -->
<div class="a" style="left:796px;top:398px;width:328px;height:241px;background:#1b4a5b;box-shadow:0 3px 16px rgba(0,0,0,0.38)"></div>
<div class="a" style="left:797px;top:424px;width:326px;height:214px;background:#f0f0f0;border:1px solid #fff;border-top-color:#fff"></div>
<div class="a" style="left:796px;top:424px;width:1px;height:215px;background:#2b5b6b"></div>
<div class="a" style="left:796px;top:638px;width:328px;height:1px;background:#2b5b6b"></div>
<div class="a" style="left:1123px;top:424px;width:1px;height:215px;background:#2b5b6b"></div>
<div class="t" style="left:800px;top:404px;color:#fff">Umbruch einfügen</div>
<svg width="12" height="12" style="left:1102px;top:405px"><path d="M1.5 1.5L10.5 10.5M10.5 1.5L1.5 10.5" stroke="#fff" stroke-width="1.1" fill="none"/></svg>
<div class="t" style="left:809px;top:431px">Art</div>
<div class="a" style="left:829px;top:437px;width:168px;height:1px;background:#a0a0a0"></div>
<div class="a" style="left:829px;top:438px;width:168px;height:1px;background:#fff"></div>
<!-- radios -->
<div class="a" style="left:821px;top:452px;width:13px;height:13px;border-radius:50%;border:1px solid #333;background:#fff"></div>
<div class="a" style="left:821px;top:475px;width:13px;height:13px;border-radius:50%;border:1px solid #333;background:#fff"></div>
<div class="a" style="left:821px;top:497px;width:13px;height:13px;border-radius:50%;border:1px solid #333;background:#fff"></div>
<div class="a" style="left:824px;top:500px;width:7px;height:7px;border-radius:50%;background:#333"></div>
<div class="t" style="left:838px;top:452px"><span class="u">Z</span>eilenumbruch</div>
<div class="t" style="left:838px;top:475px">S<span class="u">p</span>altenumbruch</div>
<div class="t" style="left:838px;top:497px"><span class="u">S</span>eitenumbruch</div>
<div class="t" style="left:821px;top:521px"><span class="u">V</span>orlage</div>
<!-- combobox -->
<div class="a" style="left:821px;top:540px;width:152px;height:23px;border:1px solid #7a7a7a;background:#fff"></div>
<div class="a" style="left:823px;top:542px;width:131px;height:19px;background:#0078d7;outline:1px dotted #000;outline-offset:-1px"></div>
<div class="t" style="left:824px;top:546px;color:#fff">[Keine]</div>
<div class="a" style="left:954px;top:542px;width:18px;height:19px;background:#cce4f7;border:1px solid #005499"></div>
<svg width="10" height="6" style="left:958px;top:549px"><path d="M0.5 0.5L5 5L9.5 0.5" stroke="#333" stroke-width="1" fill="none"/></svg>
<!-- listbox -->
<div class="a" style="left:821px;top:562px;width:152px;height:82px;border:1px solid #000;background:#fff;box-shadow:1px 2px 4px rgba(0,0,0,0.25)"></div>
<div class="a" style="left:822px;top:595px;width:133px;height:16px;background:#0078d7"></div>
<div class="t" style="left:823px;top:564px">HTML</div>
<div class="t" style="left:823px;top:580px">Linke Seite</div>
<div class="t" style="left:823px;top:596px;color:#fff">Querformat</div>
<div class="t" style="left:823px;top:612px">Rechte Seite</div>
<div class="t" style="left:823px;top:628px">Standard</div>
<div class="a" style="left:956px;top:563px;width:16px;height:80px;background:#f0f0f0"></div>
<div class="a" style="left:956px;top:597px;width:16px;height:21px;background:#cdcdcd"></div>
<svg width="10" height="6" style="left:959px;top:569px"><path d="M0.8 5.2L5 1L9.2 5.2" stroke="#606060" stroke-width="1.6" fill="none"/></svg>
<svg width="10" height="6" style="left:959px;top:631px"><path d="M0.8 0.8L5 5L9.2 0.8" stroke="#606060" stroke-width="1.6" fill="none"/></svg>
<!-- buttons -->
<div class="a" style="left:1011px;top:436px;width:99px;height:24px;background:#e1e1e1;border:2px solid #0078d7"></div>
<div class="t" style="left:1011px;top:441px;width:99px;text-align:center">OK</div>
<div class="a" style="left:1011px;top:468px;width:99px;height:24px;background:#e1e1e1;border:1px solid #adadad"></div>
<div class="t" style="left:1011px;top:473px;width:99px;text-align:center"><span class="u">A</span>bbrechen</div>
<div class="a" style="left:1011px;top:506px;width:99px;height:24px;background:#e1e1e1;border:1px solid #adadad"></div>
<div class="t" style="left:1011px;top:511px;width:99px;text-align:center"><span class="u">H</span>ilfe</div>

</body></html>
